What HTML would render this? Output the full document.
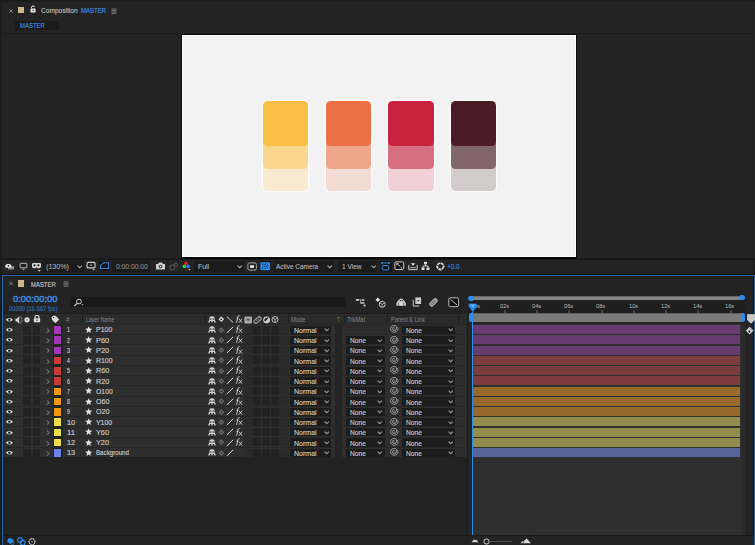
<!DOCTYPE html>
<html><head><meta charset="utf-8"><style>
html,body{margin:0;padding:0;}
body{width:755px;height:545px;overflow:hidden;position:relative;background:#1b1b1b;font-family:"Liberation Sans",sans-serif;}
body>div,body>svg{position:absolute;}
.t{white-space:nowrap;line-height:1;-webkit-text-stroke:0.15px currentColor;}
</style></head><body>
<div style="left:2px;top:2px;width:751px;height:256px;background:#232323;"></div>
<div style="left:753px;top:2px;width:2px;height:256px;background:#262626;"></div>
<div style="left:1px;top:33px;width:752px;height:1px;background:#1b1b1b;"></div>
<svg style="left:8px;top:8px;" width="6" height="6" viewBox="0 0 6 6"><path d="M1.3 1.3L4.7 4.7M4.7 1.3L1.3 4.7" stroke="#a0a0a0" stroke-width="0.75"/></svg>
<div style="left:18px;top:7px;width:6px;height:6px;background:#cdb68c;"></div>
<svg style="left:29px;top:5px;" width="8" height="8" viewBox="0 0 8 8"><path d="M2.5 3.2V2.2A1.6 1.6 0 0 1 5.6 2" fill="none" stroke="#e6e6e6" stroke-width="1"/><rect x="1.5" y="3.5" width="5" height="4" rx="0.5" fill="#e6e6e6"/><rect x="3.6" y="4.8" width="1" height="1.4" fill="#232323"/></svg>
<div class="t" style="left:41px;top:7.00px;font-size:7.70px;color:#bdbdbd;transform:scaleX(0.8572);transform-origin:0 0;">Composition</div>
<div class="t" style="left:81px;top:7.00px;font-size:7.27px;color:#3b8ee8;transform:scaleX(0.8255);transform-origin:0 0;">MASTER</div>
<svg style="left:111px;top:8px;" width="6" height="6" viewBox="0 0 6 6"><path d="M0.5 1H5.5M0.5 2.5H5.5M0.5 4H5.5M0.5 5.5H5.5" stroke="#8a8a8a" stroke-width="0.8"/></svg>
<div style="left:15px;top:21px;width:44px;height:9px;background:#1a1a1a;"></div>
<div class="t" style="left:19.9px;top:22.00px;font-size:7.27px;color:#3b8ee8;transform:scaleX(0.8189);transform-origin:0 0;">MASTER</div>
<div style="left:181px;top:34px;width:396px;height:225px;background:#0a0a0a;"></div>
<div style="left:182px;top:35px;width:394px;height:222px;background:#ffffff;"></div>
<div style="left:183px;top:36px;width:392px;height:220px;background:#f2f2f2;"></div>
<div style="left:262.9px;top:100.6px;width:45.3px;height:90.8px;background:#f2f2f2;border-radius:4.5px;box-shadow:0 0 2px 1px rgba(255,255,255,0.95);"></div>
<div style="left:262.9px;top:145.7px;width:45.3px;height:45.8px;background:#f8ebd1;border-radius:4.5px;"></div>
<div style="left:262.9px;top:123.1px;width:45.3px;height:45.8px;background:#fbd68e;border-radius:4.5px;"></div>
<div style="left:262.9px;top:100.6px;width:45.3px;height:45.8px;background:#fbbf47;border-radius:4.5px;"></div>
<div style="left:325.6px;top:100.6px;width:45.3px;height:90.8px;background:#f2f2f2;border-radius:4.5px;box-shadow:0 0 2px 1px rgba(255,255,255,0.95);"></div>
<div style="left:325.6px;top:145.7px;width:45.3px;height:45.8px;background:#f3dcd3;border-radius:4.5px;"></div>
<div style="left:325.6px;top:123.1px;width:45.3px;height:45.8px;background:#f0a68b;border-radius:4.5px;"></div>
<div style="left:325.6px;top:100.6px;width:45.3px;height:45.8px;background:#ec7045;border-radius:4.5px;"></div>
<div style="left:388.3px;top:100.6px;width:45.3px;height:90.8px;background:#f2f2f2;border-radius:4.5px;box-shadow:0 0 2px 1px rgba(255,255,255,0.95);"></div>
<div style="left:388.3px;top:145.7px;width:45.3px;height:45.8px;background:#f0d1d6;border-radius:4.5px;"></div>
<div style="left:388.3px;top:123.1px;width:45.3px;height:45.8px;background:#d66f80;border-radius:4.5px;"></div>
<div style="left:388.3px;top:100.6px;width:45.3px;height:45.8px;background:#c8223e;border-radius:4.5px;"></div>
<div style="left:451.0px;top:100.6px;width:45.3px;height:90.8px;background:#f2f2f2;border-radius:4.5px;box-shadow:0 0 2px 1px rgba(255,255,255,0.95);"></div>
<div style="left:451.0px;top:145.7px;width:45.3px;height:45.8px;background:#d4cbcd;border-radius:4.5px;"></div>
<div style="left:451.0px;top:123.1px;width:45.3px;height:45.8px;background:#82656b;border-radius:4.5px;"></div>
<div style="left:451.0px;top:100.6px;width:45.3px;height:45.8px;background:#4c1c26;border-radius:4.5px;"></div>
<div style="left:1px;top:258.5px;width:754px;height:1.2px;background:#181818;"></div>
<div style="left:2px;top:260px;width:751px;height:14px;background:#232323;"></div>
<div style="left:1px;top:274px;width:754px;height:1px;background:#151515;"></div>
<svg style="left:5px;top:261.5px;" width="10" height="9" viewBox="0 0 10 9"><rect x="3" y="4" width="6" height="3.6" rx="0.6" fill="#8a8a8a"/><path d="M0.6 3.2Q3.4 0.6 6.2 3.2L6.2 5.6H0.6Z" fill="#e8e8e8"/><rect x="0.6" y="2.6" width="5.6" height="3" rx="1.2" fill="#e8e8e8"/><circle cx="3.4" cy="3.9" r="0.8" fill="#1a1a1a"/></svg>
<svg style="left:18.5px;top:261.5px;" width="9" height="9" viewBox="0 0 9 9"><rect x="1.1" y="1.3" width="6.8" height="4.6" rx="0.9" fill="none" stroke="#b8b8b8" stroke-width="1"/><path d="M3 7.7H6L4.5 6.4Z" fill="#b8b8b8"/></svg>
<svg style="left:30.5px;top:261.5px;" width="11" height="10" viewBox="0 0 11 10"><path d="M1 2.2Q1 0.9 2.4 0.9H8.6Q10 0.9 10 2.2V4.2Q10 6.3 8 6.3H6.6L5.5 5.3L4.4 6.3H3Q1 6.3 1 4.2Z" fill="#d8d8d8"/><circle cx="3.6" cy="3.3" r="1.1" fill="#151515"/><circle cx="7.4" cy="3.3" r="1.1" fill="#151515"/><path d="M6.8 8L8.3 9.4L9.8 8Z" fill="#e0e0e0"/></svg>
<div style="left:43px;top:261px;width:41px;height:10.5px;background:#1b1b1b;border-radius:1px;"></div>
<div class="t" style="left:46.4px;top:263.00px;font-size:7.27px;color:#a8a8a8;transform:scaleX(0.9818);transform-origin:0 0;-webkit-text-stroke:0.1px currentColor;">(130%)</div>
<svg style="left:76.6px;top:265.2px;" width="5.5" height="3.9" viewBox="0 0 5.5 3.9"><path d="M0.6 0.6L2.75 2.8L4.9 0.6" fill="none" stroke="#b0b0b0" stroke-width="1.05"/></svg>
<svg style="left:86px;top:261px;" width="11" height="11" viewBox="0 0 11 11"><rect x="1.1" y="1.4" width="8" height="5.5" rx="1.2" fill="none" stroke="#d0d0d0" stroke-width="1.1"/><rect x="4.2" y="3.4" width="1.8" height="1.6" fill="#8a8a8a"/><path d="M6.3 8.2L7.6 9.5L8.9 8.2Z" fill="#e0e0e0"/></svg>
<div style="left:98.7px;top:260.6px;width:11.3px;height:10px;background:#131313;"></div>
<svg style="left:99px;top:261px;" width="11" height="11" viewBox="0 0 11 11"><path d="M1.5 7.5V4.5L4.7 1.8H9.5V7.5Z" fill="none" stroke="#3d8ee8" stroke-width="0.9"/><circle cx="1.5" cy="7.5" r="0.8" fill="#3d8ee8"/><circle cx="9.5" cy="7.5" r="0.8" fill="#3d8ee8"/><circle cx="1.5" cy="4.5" r="0.8" fill="#3d8ee8"/><circle cx="4.7" cy="1.8" r="0.8" fill="#3d8ee8"/><circle cx="9.5" cy="1.8" r="0.8" fill="#3d8ee8"/></svg>
<div style="left:112.3px;top:261px;width:39.2px;height:10.5px;background:#1b1b1b;"></div>
<div class="t" style="left:116.3px;top:263.00px;font-size:7.27px;color:#8c8c8c;transform:scaleX(0.9259);transform-origin:0 0;-webkit-text-stroke:0.1px currentColor;">0:00:00:00</div>
<svg style="left:155px;top:261px;" width="11" height="10" viewBox="0 0 11 10"><path d="M1 3H3L4 1.5H7L8 3H10V8.5H1Z" fill="#d0d0d0"/><circle cx="5.5" cy="5.6" r="1.8" fill="#232323"/><circle cx="5.5" cy="5.6" r="1" fill="#d0d0d0"/></svg>
<svg style="left:168.5px;top:261.5px;" width="10" height="9" viewBox="0 0 10 9"><circle cx="3.4" cy="5.4" r="2.4" fill="none" stroke="#505050" stroke-width="1.1"/><path d="M4.6 3.2Q6 0.8 8 1.6Q9.2 2.4 7.6 4.6" fill="none" stroke="#505050" stroke-width="1.1"/></svg>
<svg style="left:182px;top:260px;" width="10" height="12" viewBox="0 0 10 12"><circle cx="4.1" cy="3.3" r="1.9" fill="#e8141e"/><circle cx="2.4" cy="6.3" r="1.9" fill="#22d23a"/><circle cx="6.1" cy="6.3" r="1.9" fill="#3a6cf0"/><path d="M6.3 8.9L7.4 10.2L8.5 8.9Z" fill="#e0e0e0"/></svg>
<div style="left:193.7px;top:261px;width:50.1px;height:10.8px;background:#1b1b1b;"></div>
<div class="t" style="left:197.7px;top:263.00px;font-size:7.27px;color:#b8b8b8;transform:scaleX(0.9479);transform-origin:0 0;-webkit-text-stroke:0.1px currentColor;">Full</div>
<svg style="left:237.4px;top:265.2px;" width="5.5" height="3.9" viewBox="0 0 5.5 3.9"><path d="M0.6 0.6L2.75 2.8L4.9 0.6" fill="none" stroke="#b0b0b0" stroke-width="1.05"/></svg>
<svg style="left:247px;top:261.5px;" width="10" height="9" viewBox="0 0 10 9"><rect x="0.9" y="0.9" width="8.5" height="7.2" rx="1.6" fill="none" stroke="#a8a8a8" stroke-width="1"/><rect x="3" y="3.3" width="4" height="2.5" fill="#f0f0f0"/></svg>
<div style="left:259.5px;top:261.2px;width:11.5px;height:10px;background:#151515;"></div>
<svg style="left:260px;top:262px;" width="10.5" height="8.5" viewBox="0 0 10.5 8.5"><rect x="0.3" y="0.2" width="9.8" height="8.1" rx="1.2" fill="#2d8ceb"/><g fill="#101010"><circle cx="2.6" cy="2.2" r="0.6"/><circle cx="5.2" cy="2.2" r="0.6"/><circle cx="7.6" cy="3" r="0.6"/><circle cx="4" cy="4.2" r="0.6"/><circle cx="6.2" cy="4.2" r="0.6"/><circle cx="2.6" cy="6" r="0.6"/><circle cx="5.2" cy="6.2" r="0.6"/><circle cx="7.6" cy="5.6" r="0.6"/></g></svg>
<div style="left:273px;top:261px;width:61.2px;height:10.8px;background:#1b1b1b;"></div>
<div class="t" style="left:276.1px;top:263.00px;font-size:7.27px;color:#b8b8b8;transform:scaleX(0.8855);transform-origin:0 0;-webkit-text-stroke:0.1px currentColor;">Active Camera</div>
<svg style="left:327.3px;top:265.2px;" width="5.5" height="3.9" viewBox="0 0 5.5 3.9"><path d="M0.6 0.6L2.75 2.8L4.9 0.6" fill="none" stroke="#b0b0b0" stroke-width="1.05"/></svg>
<div style="left:337.8px;top:261px;width:39.2px;height:10.8px;background:#1b1b1b;"></div>
<div class="t" style="left:341.6px;top:263.00px;font-size:7.27px;color:#b8b8b8;transform:scaleX(0.9040);transform-origin:0 0;-webkit-text-stroke:0.1px currentColor;">1 View</div>
<svg style="left:371.2px;top:265.2px;" width="5.5" height="3.9" viewBox="0 0 5.5 3.9"><path d="M0.6 0.6L2.75 2.8L4.9 0.6" fill="none" stroke="#b0b0b0" stroke-width="1.05"/></svg>
<div style="left:379.8px;top:260.6px;width:11.8px;height:11px;background:#151515;"></div>
<svg style="left:380px;top:261px;" width="11" height="11" viewBox="0 0 11 11"><rect x="1" y="1.2" width="2" height="1.6" fill="#3d8ee8"/><rect x="8" y="1.2" width="2" height="1.6" fill="#3d8ee8"/><path d="M3 2H8" stroke="#3d8ee8" stroke-width="0.9"/><rect x="2.2" y="4.5" width="6.6" height="4.6" rx="1" fill="none" stroke="#3d8ee8" stroke-width="1"/></svg>
<svg style="left:393.5px;top:261.3px;" width="11" height="10" viewBox="0 0 11 10"><rect x="0.9" y="0.9" width="8.8" height="7.6" rx="1.2" fill="#141414" stroke="#c8c8c8" stroke-width="1"/><path d="M3 2.8L6 5.2" stroke="#cfcfcf" stroke-width="0.9"/><path d="M2.6 2.4H4.6M2.6 2.4V4.2" stroke="#cfcfcf" stroke-width="0.8"/><path d="M6.2 5.2L8.6 7.2L7.2 7.6Z" fill="#e0e0e0"/></svg>
<svg style="left:407.5px;top:261.5px;" width="10" height="9" viewBox="0 0 10 9"><path d="M0.8 3V7.6H9.2V3" fill="none" stroke="#cfcfcf" stroke-width="1"/><path d="M2.8 1.2H7.2L5 3.8Z" fill="#e8e8e8"/><path d="M2.4 5.6H7.6" stroke="#cfcfcf" stroke-width="0.9"/></svg>
<svg style="left:420.5px;top:261px;" width="9" height="10" viewBox="0 0 9 10"><rect x="3" y="0.8" width="3" height="2.6" fill="#dcdcdc"/><rect x="0.5" y="6.4" width="3" height="2.6" fill="#dcdcdc"/><rect x="5.5" y="6.4" width="3" height="2.6" fill="#dcdcdc"/><path d="M4.5 3.4V5M2 6.4V5H7V6.4" fill="none" stroke="#dcdcdc" stroke-width="0.9"/></svg>
<svg style="left:435.5px;top:261.5px;" width="9" height="9" viewBox="0 0 9 9"><circle cx="4.4" cy="4.3" r="3.2" fill="none" stroke="#d0d0d0" stroke-width="1.9" stroke-dasharray="3.2 0.55"/></svg>
<div class="t" style="left:447.3px;top:263.00px;font-size:7.27px;color:#3b8ee8;transform:scaleX(0.8852);transform-origin:0 0;-webkit-text-stroke:0.1px currentColor;">+0.0</div>
<div style="left:0px;top:275px;width:755px;height:270px;background:#1b1b1b;"></div>
<div style="left:2px;top:275px;width:753px;height:1px;background:#2b62a3;"></div>
<div style="left:2px;top:275px;width:1px;height:270px;background:#2b62a3;"></div>
<div style="left:754px;top:275px;width:1px;height:270px;background:#2b62a3;"></div>
<div style="left:3px;top:276px;width:751px;height:269px;background:#232323;"></div>
<div style="left:753px;top:276px;width:1px;height:269px;background:#141414;"></div>
<svg style="left:8px;top:280px;" width="6" height="7" viewBox="0 0 6 7"><path d="M1.3 1.8L4.7 5.2M4.7 1.8L1.3 5.2" stroke="#a0a0a0" stroke-width="0.75"/></svg>
<div style="left:18px;top:280px;width:6px;height:6.5px;background:#cdb68c;"></div>
<div class="t" style="left:31.3px;top:281.00px;font-size:7.27px;color:#c4c4c4;transform:scaleX(0.8156);transform-origin:0 0;">MASTER</div>
<svg style="left:62.5px;top:281px;" width="6" height="6" viewBox="0 0 6 6"><path d="M0.5 0.8H5.5M0.5 2.3H5.5M0.5 3.8H5.5M0.5 5.3H5.5" stroke="#8a8a8a" stroke-width="0.8"/></svg>
<div class="t" style="left:13px;top:294.00px;font-size:9.81px;color:#3d8ee8;transform:scaleX(0.9619);transform-origin:0 0;-webkit-text-stroke:0.4px currentColor;">0:00:00:00</div>
<div class="t" style="left:9px;top:306.00px;font-size:6.40px;color:#2d6cb4;transform:scaleX(0.9053);transform-origin:0 0;">00000 (16.667 fps)</div>
<div style="left:70px;top:297px;width:276px;height:10.3px;background:#191919;border-radius:1px;"></div>
<svg style="left:72.5px;top:298px;" width="12" height="9" viewBox="0 0 12 9"><circle cx="6" cy="3.5" r="2.4" fill="none" stroke="#d0d0d0" stroke-width="1"/><path d="M4.3 5.2L1.5 8" stroke="#d0d0d0" stroke-width="1.2"/><path d="M8.5 6.2L9.6 7.4L10.7 6.2Z" fill="#d0d0d0"/></svg>
<svg style="left:355px;top:298px;" width="12" height="10" viewBox="0 0 12 10"><g fill="#cfcfcf"><rect x="0.7" y="1" width="3.4" height="1.8" rx="0.9"/><rect x="6.5" y="1.2" width="3.2" height="1.6" rx="0.8"/><rect x="5.5" y="4.2" width="4.2" height="1.6" rx="0.8"/><rect x="8.4" y="6.5" width="2.2" height="1.9" rx="0.9"/></g><path d="M4 1.9H6.5M5.6 1.9V5H6" stroke="#cfcfcf" stroke-width="0.7" fill="none"/></svg>
<svg style="left:375px;top:296.5px;" width="12" height="11" viewBox="0 0 12 11"><rect x="1.2" y="1.2" width="3.2" height="3.2" transform="rotate(45 2.8 2.8)" fill="#e0e0e0"/><circle cx="7.2" cy="7.3" r="3" fill="none" stroke="#cfcfcf" stroke-width="1"/><path d="M7.2 7.3V9.8M7.2 7.3L5 6M7.2 7.3L9.4 6" stroke="#cfcfcf" stroke-width="0.8"/></svg>
<svg style="left:396px;top:297px;" width="11" height="9.5" viewBox="0 0 11 9.5"><path d="M0.3 8.8V6.2Q1.5 3.6 3.4 2.2Q5.1 0.6 6.8 2.2Q8.7 3.6 9.9 6.2V8.8Z" fill="#c8c8c8"/><circle cx="4.3" cy="3.6" r="0.7" fill="#1e1e1e"/><circle cx="6" cy="3.6" r="0.7" fill="#1e1e1e"/><path d="M2.4 5.6V8.6M7.9 5.6V8.6" stroke="#6a6a6a" stroke-width="0.8"/><rect x="4.6" y="4.6" width="1" height="4.2" fill="#f0f0f0"/></svg>
<svg style="left:412px;top:297px;" width="10" height="10" viewBox="0 0 10 10"><path d="M1.2 2.8V9H7" fill="none" stroke="#cfcfcf" stroke-width="1"/><rect x="3.3" y="0.4" width="5.8" height="6.6" fill="#c8c8c8"/><rect x="5.4" y="3" width="1.6" height="1.2" fill="#3a3a3a"/></svg>
<svg style="left:427.5px;top:297px;" width="11" height="10.5" viewBox="0 0 11 10.5"><rect x="0.8" y="3.2" width="9.4" height="4.4" rx="2.2" transform="rotate(-45 5.5 5.4)" fill="#9a9a9a" stroke="#bdbdbd" stroke-width="0.6"/><path d="M3.4 6.4L6.4 3.4M4.6 7.6L7.6 4.6" stroke="#5a5a5a" stroke-width="0.6"/></svg>
<svg style="left:447.8px;top:297.3px;" width="11.5" height="10.5" viewBox="0 0 11.5 10.5"><rect x="0.8" y="0.8" width="9.8" height="8.9" rx="1.6" fill="#111" stroke="#bdbdbd" stroke-width="1"/><path d="M2.3 2.2L8.9 7.9" stroke="#d0d0d0" stroke-width="0.9"/></svg>
<div style="left:3px;top:313.8px;width:464.2px;height:10.2px;background:#2b2b2b;"></div>
<div style="left:3px;top:313px;width:464.2px;height:0.8px;background:#1d1d1d;"></div>
<div style="left:3px;top:324px;width:464.2px;height:1px;background:#1c1c1c;"></div>
<svg style="left:5.3px;top:316.8px;" width="9" height="5.5" viewBox="0 0 9 5.5"><path d="M0.6 2.7Q4.4 -1.4 8.2 2.7Q4.4 6.8 0.6 2.7Z" fill="#ececec" stroke="#111" stroke-width="0.4"/><circle cx="4.4" cy="2.7" r="1.25" fill="#1a1a1a"/></svg>
<svg style="left:14.5px;top:316px;" width="9" height="8" viewBox="0 0 9 8"><path d="M0.5 2.5H2L4.2 0.5V7.5L2 5.5H0.5Z" fill="#d8d8d8"/><path d="M4.5 0.6A3.6 3.6 0 0 1 4.5 7.4" fill="none" stroke="#9a9a9a" stroke-width="1.3" stroke-dasharray="0.8 0.6"/></svg>
<svg style="left:24.3px;top:317px;" width="6" height="6" viewBox="0 0 6 6"><circle cx="3" cy="2.8" r="2.6" fill="#dcdcdc"/><circle cx="3" cy="2.8" r="0.9" fill="#8a8a8a"/></svg>
<svg style="left:33px;top:315.2px;" width="8" height="8" viewBox="0 0 8 8"><path d="M2 3.4V2.4A2 2 0 0 1 6 2.4V3.4" fill="none" stroke="#e0e0e0" stroke-width="1.1"/><rect x="0.8" y="3.3" width="6.4" height="3.9" rx="0.6" fill="#e0e0e0"/><rect x="3.5" y="4.4" width="1" height="1.6" fill="#2b2b2b"/></svg>
<div style="left:44px;top:315px;width:0.8px;height:8px;background:#1e1e1e;"></div>
<svg style="left:51.3px;top:315.3px;" width="9" height="8" viewBox="0 0 9 8"><path d="M0.8 2.2L2.2 0.8H4.6L8.2 4.4L4.4 8.2L0.8 4.6Z" fill="#dcdcdc"/><circle cx="2.6" cy="2.6" r="0.7" fill="#262626"/></svg>
<div class="t" style="left:66px;top:317.00px;font-size:6.40px;color:#858585;transform:scaleX(0.8998);transform-origin:0 0;font-style:italic;-webkit-text-stroke:0px currentColor;">#</div>
<div style="left:82.2px;top:315px;width:0.8px;height:8px;background:#1e1e1e;"></div>
<div style="left:62.3px;top:315px;width:0.8px;height:8px;background:#222222;"></div>
<div class="t" style="left:86px;top:317.00px;font-size:6.69px;color:#858585;transform:scaleX(0.7826);transform-origin:0 0;-webkit-text-stroke:0px currentColor;">Layer Name</div>
<div style="left:205.4px;top:315px;width:0.8px;height:8px;background:#1e1e1e;"></div>
<svg style="left:208.4px;top:316.2px;" width="8" height="7" viewBox="0 0 8 7"><ellipse cx="4" cy="2.5" rx="2.6" ry="2.3" fill="#d4d4d4"/><path d="M2 3.8L0.7 6.6M4 4.2V6.6M6 3.8L7.3 6.6" stroke="#d4d4d4" stroke-width="1.3"/><rect x="1.8" y="3.6" width="4.4" height="1.4" fill="#d4d4d4"/><circle cx="2.8" cy="2.9" r="0.75" fill="#202020"/><circle cx="5.2" cy="2.9" r="0.75" fill="#202020"/></svg>
<svg style="left:217.8px;top:316.4px;" width="7" height="7" viewBox="0 0 7 7"><path d="M3.3 0.3L6.2 3.2L3.3 6.1L0.4 3.2Z" fill="#cfcfcf"/><ellipse cx="3.3" cy="3.2" rx="0.9" ry="0.7" fill="#262626"/></svg>
<svg style="left:226px;top:316px;" width="8" height="7" viewBox="0 0 8 7"><path d="M0.8 0.6L7.2 6.6" stroke="#d8d8d8" stroke-width="1"/></svg>
<svg style="left:235px;top:314.8px;" width="8" height="8.5" viewBox="0 0 8 8.5"><path d="M4.6 0.6Q3.2 0.2 2.8 2L1.6 7.8" fill="none" stroke="#d8d8d8" stroke-width="0.9"/><path d="M1.4 3.2H3.6" stroke="#d8d8d8" stroke-width="0.8"/><path d="M4 3.8L7 7.6M7 3.8L4 7.6" stroke="#d8d8d8" stroke-width="0.9"/></svg>
<svg style="left:243.8px;top:315.8px;" width="8.5" height="8" viewBox="0 0 8.5 8"><rect x="0.4" y="0.4" width="7.6" height="7.2" rx="1" fill="#a8a8a8"/><rect x="2.6" y="2.6" width="3.2" height="2" fill="#5a5a5a"/></svg>
<svg style="left:253px;top:315.6px;" width="9" height="8" viewBox="0 0 9 8"><rect x="0.5" y="2.3" width="8" height="3.6" rx="1.8" transform="rotate(-40 4.5 4)" fill="none" stroke="#9a9a9a" stroke-width="1.2"/><path d="M2.8 5.2L6.2 2.8" stroke="#9a9a9a" stroke-width="0.7"/></svg>
<svg style="left:262.8px;top:315.8px;" width="8" height="8" viewBox="0 0 8 8"><circle cx="3.6" cy="3.9" r="3.1" fill="#c8c8c8" stroke="#e6e6e6" stroke-width="0.6"/><path d="M1.2 4.6Q1.6 1.2 5.6 1.6L2.4 5.4Z" fill="#1c1c1c"/></svg>
<svg style="left:271px;top:316px;" width="9" height="7" viewBox="0 0 9 7"><circle cx="4" cy="3.5" r="3" fill="none" stroke="#c8c8c8" stroke-width="0.9"/><path d="M4 3.5V6.3M4 3.5L1.5 2M4 3.5L6.5 2" stroke="#c8c8c8" stroke-width="0.8"/></svg>
<div style="left:288.2px;top:315px;width:0.8px;height:8px;background:#1e1e1e;"></div>
<div class="t" style="left:291px;top:317.00px;font-size:6.69px;color:#858585;transform:scaleX(0.8730);transform-origin:0 0;-webkit-text-stroke:0px currentColor;">Mode</div>
<div style="left:332.2px;top:315px;width:1.2px;height:8.6px;background:#2c2c2c;"></div>
<div class="t" style="left:337.4px;top:317.00px;font-size:6.69px;color:#858585;transform:scaleX(0.6857);transform-origin:0 0;-webkit-text-stroke:0px currentColor;">T</div>
<div style="left:344.2px;top:315px;width:0.8px;height:8px;background:#1e1e1e;"></div>
<div class="t" style="left:347px;top:317.00px;font-size:6.69px;color:#858585;transform:scaleX(0.8759);transform-origin:0 0;-webkit-text-stroke:0px currentColor;">TrkMat</div>
<div style="left:387.3px;top:315px;width:0.8px;height:8px;background:#1e1e1e;"></div>
<div class="t" style="left:391px;top:317.00px;font-size:6.69px;color:#858585;transform:scaleX(0.8396);transform-origin:0 0;-webkit-text-stroke:0px currentColor;">Parent &amp; Link</div>
<div style="left:457.8px;top:315px;width:0.8px;height:8px;background:#1e1e1e;"></div>
<div style="left:467.2px;top:276px;width:286px;height:259px;background:#232323;"></div>
<div style="left:467.2px;top:313px;width:1.1px;height:222px;background:#1a1a1a;"></div>
<div style="left:468.3px;top:313px;width:4.2px;height:222px;background:#262626;"></div>
<div style="left:472.5px;top:324px;width:268px;height:211px;background:#2f2f2f;"></div>
<div style="left:741px;top:313px;width:12px;height:222px;background:#232323;"></div>
<div style="left:740.5px;top:324px;width:4.8px;height:211px;background:#2a2a2a;"></div>
<div style="left:472.2px;top:295.6px;width:268.2px;height:4.7px;background:#848484;border-top:0.6px solid #666;box-sizing:border-box;"></div>
<div style="left:467.6px;top:295.8px;width:5.6px;height:4.8px;background:#2d8ceb;border-radius:2.4px 0 0 2.4px;"></div>
<div style="left:740.4px;top:295.2px;width:4.6px;height:5.3px;background:#2d8ceb;border-radius:0 2.6px 2.6px 0;"></div>
<div style="left:468px;top:301px;width:277.7px;height:11.6px;background:#1f1f1f;"></div>
<div class="t" style="left:471.2px;top:303.00px;font-size:6.25px;color:#b0b0b0;transform:scaleX(0.9130);transform-origin:0 0;-webkit-text-stroke:0.05px currentColor;">00s</div>
<svg style="left:471.5px;top:309.5px;" width="2" height="3" viewBox="0 0 2 3"><path d="M1 0.3V2.8" stroke="#8a8a8a" stroke-width="0.8"/></svg>
<div class="t" style="left:499.55px;top:303.00px;font-size:6.25px;color:#b0b0b0;transform:scaleX(0.9130);transform-origin:0 0;-webkit-text-stroke:0.05px currentColor;">02s</div>
<svg style="left:503.75px;top:309.5px;" width="2" height="3" viewBox="0 0 2 3"><path d="M1 0.3V2.8" stroke="#8a8a8a" stroke-width="0.8"/></svg>
<div class="t" style="left:531.8px;top:303.00px;font-size:6.25px;color:#b0b0b0;transform:scaleX(0.9130);transform-origin:0 0;-webkit-text-stroke:0.05px currentColor;">04s</div>
<svg style="left:536.0px;top:309.5px;" width="2" height="3" viewBox="0 0 2 3"><path d="M1 0.3V2.8" stroke="#8a8a8a" stroke-width="0.8"/></svg>
<div class="t" style="left:564.05px;top:303.00px;font-size:6.25px;color:#b0b0b0;transform:scaleX(0.9130);transform-origin:0 0;-webkit-text-stroke:0.05px currentColor;">06s</div>
<svg style="left:568.25px;top:309.5px;" width="2" height="3" viewBox="0 0 2 3"><path d="M1 0.3V2.8" stroke="#8a8a8a" stroke-width="0.8"/></svg>
<div class="t" style="left:596.3px;top:303.00px;font-size:6.25px;color:#b0b0b0;transform:scaleX(0.9130);transform-origin:0 0;-webkit-text-stroke:0.05px currentColor;">08s</div>
<svg style="left:600.5px;top:309.5px;" width="2" height="3" viewBox="0 0 2 3"><path d="M1 0.3V2.8" stroke="#8a8a8a" stroke-width="0.8"/></svg>
<div class="t" style="left:628.55px;top:303.00px;font-size:6.25px;color:#b0b0b0;transform:scaleX(0.9130);transform-origin:0 0;-webkit-text-stroke:0.05px currentColor;">10s</div>
<svg style="left:632.75px;top:309.5px;" width="2" height="3" viewBox="0 0 2 3"><path d="M1 0.3V2.8" stroke="#8a8a8a" stroke-width="0.8"/></svg>
<div class="t" style="left:660.8px;top:303.00px;font-size:6.25px;color:#b0b0b0;transform:scaleX(0.9130);transform-origin:0 0;-webkit-text-stroke:0.05px currentColor;">12s</div>
<svg style="left:665.0px;top:309.5px;" width="2" height="3" viewBox="0 0 2 3"><path d="M1 0.3V2.8" stroke="#8a8a8a" stroke-width="0.8"/></svg>
<div class="t" style="left:693.05px;top:303.00px;font-size:6.25px;color:#b0b0b0;transform:scaleX(0.9130);transform-origin:0 0;-webkit-text-stroke:0.05px currentColor;">14s</div>
<svg style="left:697.25px;top:309.5px;" width="2" height="3" viewBox="0 0 2 3"><path d="M1 0.3V2.8" stroke="#8a8a8a" stroke-width="0.8"/></svg>
<div class="t" style="left:725.3px;top:303.00px;font-size:6.25px;color:#b0b0b0;transform:scaleX(0.9130);transform-origin:0 0;-webkit-text-stroke:0.05px currentColor;">16s</div>
<svg style="left:729.5px;top:309.5px;" width="2" height="3" viewBox="0 0 2 3"><path d="M1 0.3V2.8" stroke="#8a8a8a" stroke-width="0.8"/></svg>
<div style="left:472.6px;top:313px;width:268px;height:9.3px;background:#7a7a7a;border-top:0.7px solid #5e5e5e;box-sizing:border-box;"></div>
<div style="left:468.5px;top:313.2px;width:4.3px;height:9px;background:#2d8ceb;border-radius:2px 0 0 2px;"></div>
<div style="left:741px;top:313.2px;width:3.5px;height:9px;background:#2d8ceb;border-radius:0 2px 2px 0;"></div>
<svg style="left:746.5px;top:313.5px;" width="8" height="10" viewBox="0 0 8 10"><path d="M0.5 0.5H7.5V6L4 9.2L0.5 6Z" fill="#c8c8c8" stroke="#e8e8e8" stroke-width="0.6"/></svg>
<svg style="left:744.5px;top:325.8px;" width="10" height="10" viewBox="0 0 10 10"><path d="M4.6 0.6L8.8 4.6L4.6 8.8L0.6 4.8Z" fill="#d4d4d4" stroke="#111" stroke-width="0.4"/><path d="M4.8 2.4L7 4.6" stroke="#777" stroke-width="0.7"/><circle cx="4.4" cy="5.4" r="1" fill="#111"/></svg>
<div style="left:3px;top:324px;width:464.2px;height:133.4px;background:#272727;"></div>
<div style="left:3px;top:457.3px;width:464.2px;height:77.7px;background:#222222;"></div>
<div style="left:3px;top:324.9px;width:464.2px;height:9.2px;background:#2e2e2e;"></div>
<svg style="left:5.3px;top:327.1px;" width="9" height="5.5" viewBox="0 0 9 5.5"><path d="M0.6 2.7Q4.4 -1.4 8.2 2.7Q4.4 6.8 0.6 2.7Z" fill="#ececec" stroke="#111" stroke-width="0.4"/><circle cx="4.4" cy="2.7" r="1.25" fill="#1a1a1a"/></svg>
<div style="left:23.3px;top:325.5px;width:7.5px;height:8px;background:#222222;"></div>
<div style="left:32.7px;top:325.5px;width:7.1px;height:8px;background:#222222;"></div>
<svg style="left:46.3px;top:327.8px;" width="4.5" height="5.5" viewBox="0 0 4.5 5.5"><path d="M0.8 0.6L3.3 2.6L0.8 4.6" fill="none" stroke="#8c8c8c" stroke-width="0.95"/></svg>
<div style="left:52.7px;top:324.9px;width:10px;height:9.2px;background:#1f241f;"></div>
<div style="left:53.9px;top:326.0px;width:7.5px;height:7.5px;background:#a235b8;"></div>
<div class="t" style="left:67px;top:326.00px;font-size:7.56px;color:#c9c9c9;transform:scaleX(0.6900);transform-origin:0 0;">1</div>
<svg style="left:84.8px;top:325.8px;" width="8" height="8" viewBox="0 0 8 8"><path d="M3.70 0.20 L4.67 2.57 L7.22 2.76 L5.27 4.41 L5.87 6.89 L3.70 5.55 L1.53 6.89 L2.13 4.41 L0.18 2.76 L2.73 2.57Z" fill="#e4e4e4"/></svg>
<div class="t" style="left:95.5px;top:326.00px;font-size:7.56px;color:#c9c9c9;transform:scaleX(0.9291);transform-origin:0 0;">P100</div>
<svg style="left:208.4px;top:326.3px;" width="8" height="7" viewBox="0 0 8 7"><ellipse cx="4" cy="2.5" rx="2.6" ry="2.3" fill="#d4d4d4"/><path d="M2 3.8L0.7 6.6M4 4.2V6.6M6 3.8L7.3 6.6" stroke="#d4d4d4" stroke-width="1.3"/><rect x="1.8" y="3.6" width="4.4" height="1.4" fill="#d4d4d4"/><circle cx="2.8" cy="2.9" r="0.75" fill="#202020"/><circle cx="5.2" cy="2.9" r="0.75" fill="#202020"/></svg>
<svg style="left:217.8px;top:326.5px;" width="7" height="7" viewBox="0 0 7 7"><path d="M3.3 0.3L6.2 3.2L3.3 6.1L0.4 3.2Z" fill="#6a6a6a"/><ellipse cx="3.3" cy="3.2" rx="0.9" ry="0.7" fill="#262626"/></svg>
<svg style="left:226px;top:325.9px;" width="8" height="8" viewBox="0 0 8 8"><path d="M0.8 7L7.2 0.8" stroke="#d8d8d8" stroke-width="1"/></svg>
<svg style="left:235px;top:325.2px;" width="8" height="8.5" viewBox="0 0 8 8.5"><path d="M4.6 0.6Q3.2 0.2 2.8 2L1.6 7.8" fill="none" stroke="#cfcfcf" stroke-width="0.9"/><path d="M1.4 3.2H3.6" stroke="#cfcfcf" stroke-width="0.8"/><path d="M4 3.8L7 7.6M7 3.8L4 7.6" stroke="#cfcfcf" stroke-width="0.9"/></svg>
<div style="left:243.6px;top:325.5px;width:9px;height:8px;background:#2a2a2a;"></div>
<div style="left:253.1px;top:325.5px;width:8px;height:8px;background:#222222;"></div>
<div style="left:262.3px;top:325.5px;width:7.9px;height:8px;background:#222222;"></div>
<div style="left:271.4px;top:325.5px;width:7.6px;height:8px;background:#222222;"></div>
<div style="left:279.4px;top:325.5px;width:9.9px;height:8px;background:#2a2a2a;"></div>
<div style="left:290.2px;top:325.6px;width:40.5px;height:8.3px;background:#1c1c1c;"></div>
<div class="t" style="left:293.7px;top:327.00px;font-size:7.56px;color:#c9c9c9;transform:scaleX(0.9320);transform-origin:0 0;">Normal</div>
<svg style="left:324px;top:328.4px;" width="5.5" height="3.8" viewBox="0 0 5.5 3.8"><path d="M0.6 0.6L2.75 2.6999999999999997L4.9 0.6" fill="none" stroke="#9a9a9a" stroke-width="1.05"/></svg>
<div style="left:331.6px;top:324.9px;width:2px;height:9.2px;background:#2f2f2f;"></div>
<div style="left:334.8px;top:324.9px;width:6.9px;height:9.2px;background:#232323;"></div>
<div style="left:342.7px;top:324.9px;width:44.5px;height:9.2px;background:#2c2c2c;"></div>
<svg style="left:389.8px;top:325.4px;" width="9" height="8" viewBox="0 0 9 8"><path d="M7.6 2.2A3.7 3.5 0 1 1 5.6 0.5M5.6 0.5Q7.2 1.6 6.3 3.9A1.9 1.8 0 1 1 4.4 2.0" fill="none" stroke="#a8a8a8" stroke-width="0.85"/><circle cx="4.4" cy="3.9" r="0.5" fill="#a8a8a8"/></svg>
<div style="left:402.2px;top:325.5px;width:52.8px;height:8.3px;background:#1c1c1c;"></div>
<div class="t" style="left:405.8px;top:327.00px;font-size:7.56px;color:#c9c9c9;transform:scaleX(0.8800);transform-origin:0 0;">None</div>
<svg style="left:447.8px;top:328.4px;" width="5.5" height="3.8" viewBox="0 0 5.5 3.8"><path d="M0.6 0.6L2.75 2.6999999999999997L4.9 0.6" fill="none" stroke="#9a9a9a" stroke-width="1.05"/></svg>
<div style="left:473px;top:325.1px;width:267.2px;height:9px;background:#673a70;"></div>
<div style="left:3px;top:335.15px;width:464.2px;height:9.2px;background:#2e2e2e;"></div>
<svg style="left:5.3px;top:337.35px;" width="9" height="5.5" viewBox="0 0 9 5.5"><path d="M0.6 2.7Q4.4 -1.4 8.2 2.7Q4.4 6.8 0.6 2.7Z" fill="#ececec" stroke="#111" stroke-width="0.4"/><circle cx="4.4" cy="2.7" r="1.25" fill="#1a1a1a"/></svg>
<div style="left:23.3px;top:335.75px;width:7.5px;height:8px;background:#222222;"></div>
<div style="left:32.7px;top:335.75px;width:7.1px;height:8px;background:#222222;"></div>
<svg style="left:46.3px;top:338.05px;" width="4.5" height="5.5" viewBox="0 0 4.5 5.5"><path d="M0.8 0.6L3.3 2.6L0.8 4.6" fill="none" stroke="#8c8c8c" stroke-width="0.95"/></svg>
<div style="left:52.7px;top:335.15px;width:10px;height:9.2px;background:#1f241f;"></div>
<div style="left:53.9px;top:336.25px;width:7.5px;height:7.5px;background:#a235b8;"></div>
<div class="t" style="left:67px;top:337.00px;font-size:7.56px;color:#c9c9c9;transform:scaleX(0.6900);transform-origin:0 0;">2</div>
<svg style="left:84.8px;top:336.05px;" width="8" height="8" viewBox="0 0 8 8"><path d="M3.70 0.20 L4.67 2.57 L7.22 2.76 L5.27 4.41 L5.87 6.89 L3.70 5.55 L1.53 6.89 L2.13 4.41 L0.18 2.76 L2.73 2.57Z" fill="#e4e4e4"/></svg>
<div class="t" style="left:95.5px;top:337.00px;font-size:7.56px;color:#c9c9c9;transform:scaleX(0.9816);transform-origin:0 0;">P60</div>
<svg style="left:208.4px;top:336.55px;" width="8" height="7" viewBox="0 0 8 7"><ellipse cx="4" cy="2.5" rx="2.6" ry="2.3" fill="#d4d4d4"/><path d="M2 3.8L0.7 6.6M4 4.2V6.6M6 3.8L7.3 6.6" stroke="#d4d4d4" stroke-width="1.3"/><rect x="1.8" y="3.6" width="4.4" height="1.4" fill="#d4d4d4"/><circle cx="2.8" cy="2.9" r="0.75" fill="#202020"/><circle cx="5.2" cy="2.9" r="0.75" fill="#202020"/></svg>
<svg style="left:217.8px;top:336.75px;" width="7" height="7" viewBox="0 0 7 7"><path d="M3.3 0.3L6.2 3.2L3.3 6.1L0.4 3.2Z" fill="#6a6a6a"/><ellipse cx="3.3" cy="3.2" rx="0.9" ry="0.7" fill="#262626"/></svg>
<svg style="left:226px;top:336.15px;" width="8" height="8" viewBox="0 0 8 8"><path d="M0.8 7L7.2 0.8" stroke="#d8d8d8" stroke-width="1"/></svg>
<svg style="left:235px;top:335.45px;" width="8" height="8.5" viewBox="0 0 8 8.5"><path d="M4.6 0.6Q3.2 0.2 2.8 2L1.6 7.8" fill="none" stroke="#cfcfcf" stroke-width="0.9"/><path d="M1.4 3.2H3.6" stroke="#cfcfcf" stroke-width="0.8"/><path d="M4 3.8L7 7.6M7 3.8L4 7.6" stroke="#cfcfcf" stroke-width="0.9"/></svg>
<div style="left:243.6px;top:335.75px;width:9px;height:8px;background:#2a2a2a;"></div>
<div style="left:253.1px;top:335.75px;width:8px;height:8px;background:#222222;"></div>
<div style="left:262.3px;top:335.75px;width:7.9px;height:8px;background:#222222;"></div>
<div style="left:271.4px;top:335.75px;width:7.6px;height:8px;background:#222222;"></div>
<div style="left:279.4px;top:335.75px;width:9.9px;height:8px;background:#2a2a2a;"></div>
<div style="left:290.2px;top:335.85px;width:40.5px;height:8.3px;background:#1c1c1c;"></div>
<div class="t" style="left:293.7px;top:337.00px;font-size:7.56px;color:#c9c9c9;transform:scaleX(0.9320);transform-origin:0 0;">Normal</div>
<svg style="left:324px;top:338.65px;" width="5.5" height="3.8" viewBox="0 0 5.5 3.8"><path d="M0.6 0.6L2.75 2.6999999999999997L4.9 0.6" fill="none" stroke="#9a9a9a" stroke-width="1.05"/></svg>
<div style="left:331.6px;top:335.15px;width:2px;height:9.2px;background:#2f2f2f;"></div>
<div style="left:334.8px;top:335.15px;width:6.9px;height:9.2px;background:#232323;"></div>
<div style="left:345.9px;top:335.75px;width:38.7px;height:8.3px;background:#1c1c1c;"></div>
<div class="t" style="left:349.6px;top:337.00px;font-size:7.56px;color:#c9c9c9;transform:scaleX(0.8800);transform-origin:0 0;">None</div>
<svg style="left:377.2px;top:338.65px;" width="5.5" height="3.8" viewBox="0 0 5.5 3.8"><path d="M0.6 0.6L2.75 2.6999999999999997L4.9 0.6" fill="none" stroke="#9a9a9a" stroke-width="1.05"/></svg>
<svg style="left:389.8px;top:335.65px;" width="9" height="8" viewBox="0 0 9 8"><path d="M7.6 2.2A3.7 3.5 0 1 1 5.6 0.5M5.6 0.5Q7.2 1.6 6.3 3.9A1.9 1.8 0 1 1 4.4 2.0" fill="none" stroke="#a8a8a8" stroke-width="0.85"/><circle cx="4.4" cy="3.9" r="0.5" fill="#a8a8a8"/></svg>
<div style="left:402.2px;top:335.75px;width:52.8px;height:8.3px;background:#1c1c1c;"></div>
<div class="t" style="left:405.8px;top:337.00px;font-size:7.56px;color:#c9c9c9;transform:scaleX(0.8800);transform-origin:0 0;">None</div>
<svg style="left:447.8px;top:338.65px;" width="5.5" height="3.8" viewBox="0 0 5.5 3.8"><path d="M0.6 0.6L2.75 2.6999999999999997L4.9 0.6" fill="none" stroke="#9a9a9a" stroke-width="1.05"/></svg>
<div style="left:473px;top:335.35px;width:267.2px;height:9px;background:#673a70;"></div>
<div style="left:3px;top:345.4px;width:464.2px;height:9.2px;background:#2e2e2e;"></div>
<svg style="left:5.3px;top:347.6px;" width="9" height="5.5" viewBox="0 0 9 5.5"><path d="M0.6 2.7Q4.4 -1.4 8.2 2.7Q4.4 6.8 0.6 2.7Z" fill="#ececec" stroke="#111" stroke-width="0.4"/><circle cx="4.4" cy="2.7" r="1.25" fill="#1a1a1a"/></svg>
<div style="left:23.3px;top:346.0px;width:7.5px;height:8px;background:#222222;"></div>
<div style="left:32.7px;top:346.0px;width:7.1px;height:8px;background:#222222;"></div>
<svg style="left:46.3px;top:348.3px;" width="4.5" height="5.5" viewBox="0 0 4.5 5.5"><path d="M0.8 0.6L3.3 2.6L0.8 4.6" fill="none" stroke="#8c8c8c" stroke-width="0.95"/></svg>
<div style="left:52.7px;top:345.4px;width:10px;height:9.2px;background:#1f241f;"></div>
<div style="left:53.9px;top:346.5px;width:7.5px;height:7.5px;background:#a235b8;"></div>
<div class="t" style="left:67px;top:347.00px;font-size:7.56px;color:#c9c9c9;transform:scaleX(0.6900);transform-origin:0 0;">3</div>
<svg style="left:84.8px;top:346.3px;" width="8" height="8" viewBox="0 0 8 8"><path d="M3.70 0.20 L4.67 2.57 L7.22 2.76 L5.27 4.41 L5.87 6.89 L3.70 5.55 L1.53 6.89 L2.13 4.41 L0.18 2.76 L2.73 2.57Z" fill="#e4e4e4"/></svg>
<div class="t" style="left:95.5px;top:347.00px;font-size:7.56px;color:#c9c9c9;transform:scaleX(0.9816);transform-origin:0 0;">P20</div>
<svg style="left:208.4px;top:346.8px;" width="8" height="7" viewBox="0 0 8 7"><ellipse cx="4" cy="2.5" rx="2.6" ry="2.3" fill="#d4d4d4"/><path d="M2 3.8L0.7 6.6M4 4.2V6.6M6 3.8L7.3 6.6" stroke="#d4d4d4" stroke-width="1.3"/><rect x="1.8" y="3.6" width="4.4" height="1.4" fill="#d4d4d4"/><circle cx="2.8" cy="2.9" r="0.75" fill="#202020"/><circle cx="5.2" cy="2.9" r="0.75" fill="#202020"/></svg>
<svg style="left:217.8px;top:347.0px;" width="7" height="7" viewBox="0 0 7 7"><path d="M3.3 0.3L6.2 3.2L3.3 6.1L0.4 3.2Z" fill="#6a6a6a"/><ellipse cx="3.3" cy="3.2" rx="0.9" ry="0.7" fill="#262626"/></svg>
<svg style="left:226px;top:346.4px;" width="8" height="8" viewBox="0 0 8 8"><path d="M0.8 7L7.2 0.8" stroke="#d8d8d8" stroke-width="1"/></svg>
<svg style="left:235px;top:345.7px;" width="8" height="8.5" viewBox="0 0 8 8.5"><path d="M4.6 0.6Q3.2 0.2 2.8 2L1.6 7.8" fill="none" stroke="#cfcfcf" stroke-width="0.9"/><path d="M1.4 3.2H3.6" stroke="#cfcfcf" stroke-width="0.8"/><path d="M4 3.8L7 7.6M7 3.8L4 7.6" stroke="#cfcfcf" stroke-width="0.9"/></svg>
<div style="left:243.6px;top:346.0px;width:9px;height:8px;background:#2a2a2a;"></div>
<div style="left:253.1px;top:346.0px;width:8px;height:8px;background:#222222;"></div>
<div style="left:262.3px;top:346.0px;width:7.9px;height:8px;background:#222222;"></div>
<div style="left:271.4px;top:346.0px;width:7.6px;height:8px;background:#222222;"></div>
<div style="left:279.4px;top:346.0px;width:9.9px;height:8px;background:#2a2a2a;"></div>
<div style="left:290.2px;top:346.1px;width:40.5px;height:8.3px;background:#1c1c1c;"></div>
<div class="t" style="left:293.7px;top:347.00px;font-size:7.56px;color:#c9c9c9;transform:scaleX(0.9320);transform-origin:0 0;">Normal</div>
<svg style="left:324px;top:348.9px;" width="5.5" height="3.8" viewBox="0 0 5.5 3.8"><path d="M0.6 0.6L2.75 2.6999999999999997L4.9 0.6" fill="none" stroke="#9a9a9a" stroke-width="1.05"/></svg>
<div style="left:331.6px;top:345.4px;width:2px;height:9.2px;background:#2f2f2f;"></div>
<div style="left:334.8px;top:345.4px;width:6.9px;height:9.2px;background:#232323;"></div>
<div style="left:345.9px;top:346.0px;width:38.7px;height:8.3px;background:#1c1c1c;"></div>
<div class="t" style="left:349.6px;top:347.00px;font-size:7.56px;color:#c9c9c9;transform:scaleX(0.8800);transform-origin:0 0;">None</div>
<svg style="left:377.2px;top:348.9px;" width="5.5" height="3.8" viewBox="0 0 5.5 3.8"><path d="M0.6 0.6L2.75 2.6999999999999997L4.9 0.6" fill="none" stroke="#9a9a9a" stroke-width="1.05"/></svg>
<svg style="left:389.8px;top:345.9px;" width="9" height="8" viewBox="0 0 9 8"><path d="M7.6 2.2A3.7 3.5 0 1 1 5.6 0.5M5.6 0.5Q7.2 1.6 6.3 3.9A1.9 1.8 0 1 1 4.4 2.0" fill="none" stroke="#a8a8a8" stroke-width="0.85"/><circle cx="4.4" cy="3.9" r="0.5" fill="#a8a8a8"/></svg>
<div style="left:402.2px;top:346.0px;width:52.8px;height:8.3px;background:#1c1c1c;"></div>
<div class="t" style="left:405.8px;top:347.00px;font-size:7.56px;color:#c9c9c9;transform:scaleX(0.8800);transform-origin:0 0;">None</div>
<svg style="left:447.8px;top:348.9px;" width="5.5" height="3.8" viewBox="0 0 5.5 3.8"><path d="M0.6 0.6L2.75 2.6999999999999997L4.9 0.6" fill="none" stroke="#9a9a9a" stroke-width="1.05"/></svg>
<div style="left:473px;top:345.6px;width:267.2px;height:9px;background:#673a70;"></div>
<div style="left:3px;top:355.65px;width:464.2px;height:9.2px;background:#2e2e2e;"></div>
<svg style="left:5.3px;top:357.85px;" width="9" height="5.5" viewBox="0 0 9 5.5"><path d="M0.6 2.7Q4.4 -1.4 8.2 2.7Q4.4 6.8 0.6 2.7Z" fill="#ececec" stroke="#111" stroke-width="0.4"/><circle cx="4.4" cy="2.7" r="1.25" fill="#1a1a1a"/></svg>
<div style="left:23.3px;top:356.25px;width:7.5px;height:8px;background:#222222;"></div>
<div style="left:32.7px;top:356.25px;width:7.1px;height:8px;background:#222222;"></div>
<svg style="left:46.3px;top:358.55px;" width="4.5" height="5.5" viewBox="0 0 4.5 5.5"><path d="M0.8 0.6L3.3 2.6L0.8 4.6" fill="none" stroke="#8c8c8c" stroke-width="0.95"/></svg>
<div style="left:52.7px;top:355.65px;width:10px;height:9.2px;background:#1f241f;"></div>
<div style="left:53.9px;top:356.75px;width:7.5px;height:7.5px;background:#c83a3a;"></div>
<div class="t" style="left:67px;top:357.00px;font-size:7.56px;color:#c9c9c9;transform:scaleX(0.6900);transform-origin:0 0;">4</div>
<svg style="left:84.8px;top:356.55px;" width="8" height="8" viewBox="0 0 8 8"><path d="M3.70 0.20 L4.67 2.57 L7.22 2.76 L5.27 4.41 L5.87 6.89 L3.70 5.55 L1.53 6.89 L2.13 4.41 L0.18 2.76 L2.73 2.57Z" fill="#e4e4e4"/></svg>
<div class="t" style="left:95.5px;top:357.00px;font-size:7.56px;color:#c9c9c9;transform:scaleX(0.9188);transform-origin:0 0;">R100</div>
<svg style="left:208.4px;top:357.05px;" width="8" height="7" viewBox="0 0 8 7"><ellipse cx="4" cy="2.5" rx="2.6" ry="2.3" fill="#d4d4d4"/><path d="M2 3.8L0.7 6.6M4 4.2V6.6M6 3.8L7.3 6.6" stroke="#d4d4d4" stroke-width="1.3"/><rect x="1.8" y="3.6" width="4.4" height="1.4" fill="#d4d4d4"/><circle cx="2.8" cy="2.9" r="0.75" fill="#202020"/><circle cx="5.2" cy="2.9" r="0.75" fill="#202020"/></svg>
<svg style="left:217.8px;top:357.25px;" width="7" height="7" viewBox="0 0 7 7"><path d="M3.3 0.3L6.2 3.2L3.3 6.1L0.4 3.2Z" fill="#6a6a6a"/><ellipse cx="3.3" cy="3.2" rx="0.9" ry="0.7" fill="#262626"/></svg>
<svg style="left:226px;top:356.65px;" width="8" height="8" viewBox="0 0 8 8"><path d="M0.8 7L7.2 0.8" stroke="#d8d8d8" stroke-width="1"/></svg>
<svg style="left:235px;top:355.95px;" width="8" height="8.5" viewBox="0 0 8 8.5"><path d="M4.6 0.6Q3.2 0.2 2.8 2L1.6 7.8" fill="none" stroke="#cfcfcf" stroke-width="0.9"/><path d="M1.4 3.2H3.6" stroke="#cfcfcf" stroke-width="0.8"/><path d="M4 3.8L7 7.6M7 3.8L4 7.6" stroke="#cfcfcf" stroke-width="0.9"/></svg>
<div style="left:243.6px;top:356.25px;width:9px;height:8px;background:#2a2a2a;"></div>
<div style="left:253.1px;top:356.25px;width:8px;height:8px;background:#222222;"></div>
<div style="left:262.3px;top:356.25px;width:7.9px;height:8px;background:#222222;"></div>
<div style="left:271.4px;top:356.25px;width:7.6px;height:8px;background:#222222;"></div>
<div style="left:279.4px;top:356.25px;width:9.9px;height:8px;background:#2a2a2a;"></div>
<div style="left:290.2px;top:356.35px;width:40.5px;height:8.3px;background:#1c1c1c;"></div>
<div class="t" style="left:293.7px;top:358.00px;font-size:7.56px;color:#c9c9c9;transform:scaleX(0.9320);transform-origin:0 0;">Normal</div>
<svg style="left:324px;top:359.15px;" width="5.5" height="3.8" viewBox="0 0 5.5 3.8"><path d="M0.6 0.6L2.75 2.6999999999999997L4.9 0.6" fill="none" stroke="#9a9a9a" stroke-width="1.05"/></svg>
<div style="left:331.6px;top:355.65px;width:2px;height:9.2px;background:#2f2f2f;"></div>
<div style="left:334.8px;top:355.65px;width:6.9px;height:9.2px;background:#232323;"></div>
<div style="left:345.9px;top:356.25px;width:38.7px;height:8.3px;background:#1c1c1c;"></div>
<div class="t" style="left:349.6px;top:358.00px;font-size:7.56px;color:#c9c9c9;transform:scaleX(0.8800);transform-origin:0 0;">None</div>
<svg style="left:377.2px;top:359.15px;" width="5.5" height="3.8" viewBox="0 0 5.5 3.8"><path d="M0.6 0.6L2.75 2.6999999999999997L4.9 0.6" fill="none" stroke="#9a9a9a" stroke-width="1.05"/></svg>
<svg style="left:389.8px;top:356.15px;" width="9" height="8" viewBox="0 0 9 8"><path d="M7.6 2.2A3.7 3.5 0 1 1 5.6 0.5M5.6 0.5Q7.2 1.6 6.3 3.9A1.9 1.8 0 1 1 4.4 2.0" fill="none" stroke="#a8a8a8" stroke-width="0.85"/><circle cx="4.4" cy="3.9" r="0.5" fill="#a8a8a8"/></svg>
<div style="left:402.2px;top:356.25px;width:52.8px;height:8.3px;background:#1c1c1c;"></div>
<div class="t" style="left:405.8px;top:358.00px;font-size:7.56px;color:#c9c9c9;transform:scaleX(0.8800);transform-origin:0 0;">None</div>
<svg style="left:447.8px;top:359.15px;" width="5.5" height="3.8" viewBox="0 0 5.5 3.8"><path d="M0.6 0.6L2.75 2.6999999999999997L4.9 0.6" fill="none" stroke="#9a9a9a" stroke-width="1.05"/></svg>
<div style="left:473px;top:355.85px;width:267.2px;height:9px;background:#7d3c3e;"></div>
<div style="left:3px;top:365.9px;width:464.2px;height:9.2px;background:#2e2e2e;"></div>
<svg style="left:5.3px;top:368.1px;" width="9" height="5.5" viewBox="0 0 9 5.5"><path d="M0.6 2.7Q4.4 -1.4 8.2 2.7Q4.4 6.8 0.6 2.7Z" fill="#ececec" stroke="#111" stroke-width="0.4"/><circle cx="4.4" cy="2.7" r="1.25" fill="#1a1a1a"/></svg>
<div style="left:23.3px;top:366.5px;width:7.5px;height:8px;background:#222222;"></div>
<div style="left:32.7px;top:366.5px;width:7.1px;height:8px;background:#222222;"></div>
<svg style="left:46.3px;top:368.8px;" width="4.5" height="5.5" viewBox="0 0 4.5 5.5"><path d="M0.8 0.6L3.3 2.6L0.8 4.6" fill="none" stroke="#8c8c8c" stroke-width="0.95"/></svg>
<div style="left:52.7px;top:365.9px;width:10px;height:9.2px;background:#1f241f;"></div>
<div style="left:53.9px;top:367.0px;width:7.5px;height:7.5px;background:#c83a3a;"></div>
<div class="t" style="left:67px;top:367.00px;font-size:7.56px;color:#c9c9c9;transform:scaleX(0.6900);transform-origin:0 0;">5</div>
<svg style="left:84.8px;top:366.8px;" width="8" height="8" viewBox="0 0 8 8"><path d="M3.70 0.20 L4.67 2.57 L7.22 2.76 L5.27 4.41 L5.87 6.89 L3.70 5.55 L1.53 6.89 L2.13 4.41 L0.18 2.76 L2.73 2.57Z" fill="#e4e4e4"/></svg>
<div class="t" style="left:95.5px;top:367.00px;font-size:7.56px;color:#c9c9c9;transform:scaleX(0.9593);transform-origin:0 0;">R60</div>
<svg style="left:208.4px;top:367.3px;" width="8" height="7" viewBox="0 0 8 7"><ellipse cx="4" cy="2.5" rx="2.6" ry="2.3" fill="#d4d4d4"/><path d="M2 3.8L0.7 6.6M4 4.2V6.6M6 3.8L7.3 6.6" stroke="#d4d4d4" stroke-width="1.3"/><rect x="1.8" y="3.6" width="4.4" height="1.4" fill="#d4d4d4"/><circle cx="2.8" cy="2.9" r="0.75" fill="#202020"/><circle cx="5.2" cy="2.9" r="0.75" fill="#202020"/></svg>
<svg style="left:217.8px;top:367.5px;" width="7" height="7" viewBox="0 0 7 7"><path d="M3.3 0.3L6.2 3.2L3.3 6.1L0.4 3.2Z" fill="#6a6a6a"/><ellipse cx="3.3" cy="3.2" rx="0.9" ry="0.7" fill="#262626"/></svg>
<svg style="left:226px;top:366.9px;" width="8" height="8" viewBox="0 0 8 8"><path d="M0.8 7L7.2 0.8" stroke="#d8d8d8" stroke-width="1"/></svg>
<svg style="left:235px;top:366.2px;" width="8" height="8.5" viewBox="0 0 8 8.5"><path d="M4.6 0.6Q3.2 0.2 2.8 2L1.6 7.8" fill="none" stroke="#cfcfcf" stroke-width="0.9"/><path d="M1.4 3.2H3.6" stroke="#cfcfcf" stroke-width="0.8"/><path d="M4 3.8L7 7.6M7 3.8L4 7.6" stroke="#cfcfcf" stroke-width="0.9"/></svg>
<div style="left:243.6px;top:366.5px;width:9px;height:8px;background:#2a2a2a;"></div>
<div style="left:253.1px;top:366.5px;width:8px;height:8px;background:#222222;"></div>
<div style="left:262.3px;top:366.5px;width:7.9px;height:8px;background:#222222;"></div>
<div style="left:271.4px;top:366.5px;width:7.6px;height:8px;background:#222222;"></div>
<div style="left:279.4px;top:366.5px;width:9.9px;height:8px;background:#2a2a2a;"></div>
<div style="left:290.2px;top:366.6px;width:40.5px;height:8.3px;background:#1c1c1c;"></div>
<div class="t" style="left:293.7px;top:368.00px;font-size:7.56px;color:#c9c9c9;transform:scaleX(0.9320);transform-origin:0 0;">Normal</div>
<svg style="left:324px;top:369.4px;" width="5.5" height="3.8" viewBox="0 0 5.5 3.8"><path d="M0.6 0.6L2.75 2.6999999999999997L4.9 0.6" fill="none" stroke="#9a9a9a" stroke-width="1.05"/></svg>
<div style="left:331.6px;top:365.9px;width:2px;height:9.2px;background:#2f2f2f;"></div>
<div style="left:334.8px;top:365.9px;width:6.9px;height:9.2px;background:#232323;"></div>
<div style="left:345.9px;top:366.5px;width:38.7px;height:8.3px;background:#1c1c1c;"></div>
<div class="t" style="left:349.6px;top:368.00px;font-size:7.56px;color:#c9c9c9;transform:scaleX(0.8800);transform-origin:0 0;">None</div>
<svg style="left:377.2px;top:369.4px;" width="5.5" height="3.8" viewBox="0 0 5.5 3.8"><path d="M0.6 0.6L2.75 2.6999999999999997L4.9 0.6" fill="none" stroke="#9a9a9a" stroke-width="1.05"/></svg>
<svg style="left:389.8px;top:366.4px;" width="9" height="8" viewBox="0 0 9 8"><path d="M7.6 2.2A3.7 3.5 0 1 1 5.6 0.5M5.6 0.5Q7.2 1.6 6.3 3.9A1.9 1.8 0 1 1 4.4 2.0" fill="none" stroke="#a8a8a8" stroke-width="0.85"/><circle cx="4.4" cy="3.9" r="0.5" fill="#a8a8a8"/></svg>
<div style="left:402.2px;top:366.5px;width:52.8px;height:8.3px;background:#1c1c1c;"></div>
<div class="t" style="left:405.8px;top:368.00px;font-size:7.56px;color:#c9c9c9;transform:scaleX(0.8800);transform-origin:0 0;">None</div>
<svg style="left:447.8px;top:369.4px;" width="5.5" height="3.8" viewBox="0 0 5.5 3.8"><path d="M0.6 0.6L2.75 2.6999999999999997L4.9 0.6" fill="none" stroke="#9a9a9a" stroke-width="1.05"/></svg>
<div style="left:473px;top:366.1px;width:267.2px;height:9px;background:#7d3c3e;"></div>
<div style="left:3px;top:376.15px;width:464.2px;height:9.2px;background:#2e2e2e;"></div>
<svg style="left:5.3px;top:378.35px;" width="9" height="5.5" viewBox="0 0 9 5.5"><path d="M0.6 2.7Q4.4 -1.4 8.2 2.7Q4.4 6.8 0.6 2.7Z" fill="#ececec" stroke="#111" stroke-width="0.4"/><circle cx="4.4" cy="2.7" r="1.25" fill="#1a1a1a"/></svg>
<div style="left:23.3px;top:376.75px;width:7.5px;height:8px;background:#222222;"></div>
<div style="left:32.7px;top:376.75px;width:7.1px;height:8px;background:#222222;"></div>
<svg style="left:46.3px;top:379.05px;" width="4.5" height="5.5" viewBox="0 0 4.5 5.5"><path d="M0.8 0.6L3.3 2.6L0.8 4.6" fill="none" stroke="#8c8c8c" stroke-width="0.95"/></svg>
<div style="left:52.7px;top:376.15px;width:10px;height:9.2px;background:#1f241f;"></div>
<div style="left:53.9px;top:377.25px;width:7.5px;height:7.5px;background:#c83a3a;"></div>
<div class="t" style="left:67px;top:378.00px;font-size:7.56px;color:#c9c9c9;transform:scaleX(0.6900);transform-origin:0 0;">6</div>
<svg style="left:84.8px;top:377.05px;" width="8" height="8" viewBox="0 0 8 8"><path d="M3.70 0.20 L4.67 2.57 L7.22 2.76 L5.27 4.41 L5.87 6.89 L3.70 5.55 L1.53 6.89 L2.13 4.41 L0.18 2.76 L2.73 2.57Z" fill="#e4e4e4"/></svg>
<div class="t" style="left:95.5px;top:378.00px;font-size:7.56px;color:#c9c9c9;transform:scaleX(0.9593);transform-origin:0 0;">R20</div>
<svg style="left:208.4px;top:377.55px;" width="8" height="7" viewBox="0 0 8 7"><ellipse cx="4" cy="2.5" rx="2.6" ry="2.3" fill="#d4d4d4"/><path d="M2 3.8L0.7 6.6M4 4.2V6.6M6 3.8L7.3 6.6" stroke="#d4d4d4" stroke-width="1.3"/><rect x="1.8" y="3.6" width="4.4" height="1.4" fill="#d4d4d4"/><circle cx="2.8" cy="2.9" r="0.75" fill="#202020"/><circle cx="5.2" cy="2.9" r="0.75" fill="#202020"/></svg>
<svg style="left:217.8px;top:377.75px;" width="7" height="7" viewBox="0 0 7 7"><path d="M3.3 0.3L6.2 3.2L3.3 6.1L0.4 3.2Z" fill="#6a6a6a"/><ellipse cx="3.3" cy="3.2" rx="0.9" ry="0.7" fill="#262626"/></svg>
<svg style="left:226px;top:377.15px;" width="8" height="8" viewBox="0 0 8 8"><path d="M0.8 7L7.2 0.8" stroke="#d8d8d8" stroke-width="1"/></svg>
<svg style="left:235px;top:376.45px;" width="8" height="8.5" viewBox="0 0 8 8.5"><path d="M4.6 0.6Q3.2 0.2 2.8 2L1.6 7.8" fill="none" stroke="#cfcfcf" stroke-width="0.9"/><path d="M1.4 3.2H3.6" stroke="#cfcfcf" stroke-width="0.8"/><path d="M4 3.8L7 7.6M7 3.8L4 7.6" stroke="#cfcfcf" stroke-width="0.9"/></svg>
<div style="left:243.6px;top:376.75px;width:9px;height:8px;background:#2a2a2a;"></div>
<div style="left:253.1px;top:376.75px;width:8px;height:8px;background:#222222;"></div>
<div style="left:262.3px;top:376.75px;width:7.9px;height:8px;background:#222222;"></div>
<div style="left:271.4px;top:376.75px;width:7.6px;height:8px;background:#222222;"></div>
<div style="left:279.4px;top:376.75px;width:9.9px;height:8px;background:#2a2a2a;"></div>
<div style="left:290.2px;top:376.85px;width:40.5px;height:8.3px;background:#1c1c1c;"></div>
<div class="t" style="left:293.7px;top:378.00px;font-size:7.56px;color:#c9c9c9;transform:scaleX(0.9320);transform-origin:0 0;">Normal</div>
<svg style="left:324px;top:379.65px;" width="5.5" height="3.8" viewBox="0 0 5.5 3.8"><path d="M0.6 0.6L2.75 2.6999999999999997L4.9 0.6" fill="none" stroke="#9a9a9a" stroke-width="1.05"/></svg>
<div style="left:331.6px;top:376.15px;width:2px;height:9.2px;background:#2f2f2f;"></div>
<div style="left:334.8px;top:376.15px;width:6.9px;height:9.2px;background:#232323;"></div>
<div style="left:345.9px;top:376.75px;width:38.7px;height:8.3px;background:#1c1c1c;"></div>
<div class="t" style="left:349.6px;top:378.00px;font-size:7.56px;color:#c9c9c9;transform:scaleX(0.8800);transform-origin:0 0;">None</div>
<svg style="left:377.2px;top:379.65px;" width="5.5" height="3.8" viewBox="0 0 5.5 3.8"><path d="M0.6 0.6L2.75 2.6999999999999997L4.9 0.6" fill="none" stroke="#9a9a9a" stroke-width="1.05"/></svg>
<svg style="left:389.8px;top:376.65px;" width="9" height="8" viewBox="0 0 9 8"><path d="M7.6 2.2A3.7 3.5 0 1 1 5.6 0.5M5.6 0.5Q7.2 1.6 6.3 3.9A1.9 1.8 0 1 1 4.4 2.0" fill="none" stroke="#a8a8a8" stroke-width="0.85"/><circle cx="4.4" cy="3.9" r="0.5" fill="#a8a8a8"/></svg>
<div style="left:402.2px;top:376.75px;width:52.8px;height:8.3px;background:#1c1c1c;"></div>
<div class="t" style="left:405.8px;top:378.00px;font-size:7.56px;color:#c9c9c9;transform:scaleX(0.8800);transform-origin:0 0;">None</div>
<svg style="left:447.8px;top:379.65px;" width="5.5" height="3.8" viewBox="0 0 5.5 3.8"><path d="M0.6 0.6L2.75 2.6999999999999997L4.9 0.6" fill="none" stroke="#9a9a9a" stroke-width="1.05"/></svg>
<div style="left:473px;top:376.35px;width:267.2px;height:9px;background:#7d3c3e;"></div>
<div style="left:3px;top:386.4px;width:464.2px;height:9.2px;background:#2e2e2e;"></div>
<svg style="left:5.3px;top:388.6px;" width="9" height="5.5" viewBox="0 0 9 5.5"><path d="M0.6 2.7Q4.4 -1.4 8.2 2.7Q4.4 6.8 0.6 2.7Z" fill="#ececec" stroke="#111" stroke-width="0.4"/><circle cx="4.4" cy="2.7" r="1.25" fill="#1a1a1a"/></svg>
<div style="left:23.3px;top:387.0px;width:7.5px;height:8px;background:#222222;"></div>
<div style="left:32.7px;top:387.0px;width:7.1px;height:8px;background:#222222;"></div>
<svg style="left:46.3px;top:389.3px;" width="4.5" height="5.5" viewBox="0 0 4.5 5.5"><path d="M0.8 0.6L3.3 2.6L0.8 4.6" fill="none" stroke="#8c8c8c" stroke-width="0.95"/></svg>
<div style="left:52.7px;top:386.4px;width:10px;height:9.2px;background:#1f241f;"></div>
<div style="left:53.9px;top:387.5px;width:7.5px;height:7.5px;background:#f0960f;"></div>
<div class="t" style="left:67px;top:388.00px;font-size:7.56px;color:#c9c9c9;transform:scaleX(0.6900);transform-origin:0 0;">7</div>
<svg style="left:84.8px;top:387.3px;" width="8" height="8" viewBox="0 0 8 8"><path d="M3.70 0.20 L4.67 2.57 L7.22 2.76 L5.27 4.41 L5.87 6.89 L3.70 5.55 L1.53 6.89 L2.13 4.41 L0.18 2.76 L2.73 2.57Z" fill="#e4e4e4"/></svg>
<div class="t" style="left:95.5px;top:388.00px;font-size:7.56px;color:#c9c9c9;transform:scaleX(0.9087);transform-origin:0 0;">O100</div>
<svg style="left:208.4px;top:387.8px;" width="8" height="7" viewBox="0 0 8 7"><ellipse cx="4" cy="2.5" rx="2.6" ry="2.3" fill="#d4d4d4"/><path d="M2 3.8L0.7 6.6M4 4.2V6.6M6 3.8L7.3 6.6" stroke="#d4d4d4" stroke-width="1.3"/><rect x="1.8" y="3.6" width="4.4" height="1.4" fill="#d4d4d4"/><circle cx="2.8" cy="2.9" r="0.75" fill="#202020"/><circle cx="5.2" cy="2.9" r="0.75" fill="#202020"/></svg>
<svg style="left:217.8px;top:388.0px;" width="7" height="7" viewBox="0 0 7 7"><path d="M3.3 0.3L6.2 3.2L3.3 6.1L0.4 3.2Z" fill="#6a6a6a"/><ellipse cx="3.3" cy="3.2" rx="0.9" ry="0.7" fill="#262626"/></svg>
<svg style="left:226px;top:387.4px;" width="8" height="8" viewBox="0 0 8 8"><path d="M0.8 7L7.2 0.8" stroke="#d8d8d8" stroke-width="1"/></svg>
<svg style="left:235px;top:386.7px;" width="8" height="8.5" viewBox="0 0 8 8.5"><path d="M4.6 0.6Q3.2 0.2 2.8 2L1.6 7.8" fill="none" stroke="#cfcfcf" stroke-width="0.9"/><path d="M1.4 3.2H3.6" stroke="#cfcfcf" stroke-width="0.8"/><path d="M4 3.8L7 7.6M7 3.8L4 7.6" stroke="#cfcfcf" stroke-width="0.9"/></svg>
<div style="left:243.6px;top:387.0px;width:9px;height:8px;background:#2a2a2a;"></div>
<div style="left:253.1px;top:387.0px;width:8px;height:8px;background:#222222;"></div>
<div style="left:262.3px;top:387.0px;width:7.9px;height:8px;background:#222222;"></div>
<div style="left:271.4px;top:387.0px;width:7.6px;height:8px;background:#222222;"></div>
<div style="left:279.4px;top:387.0px;width:9.9px;height:8px;background:#2a2a2a;"></div>
<div style="left:290.2px;top:387.1px;width:40.5px;height:8.3px;background:#1c1c1c;"></div>
<div class="t" style="left:293.7px;top:388.00px;font-size:7.56px;color:#c9c9c9;transform:scaleX(0.9320);transform-origin:0 0;">Normal</div>
<svg style="left:324px;top:389.9px;" width="5.5" height="3.8" viewBox="0 0 5.5 3.8"><path d="M0.6 0.6L2.75 2.6999999999999997L4.9 0.6" fill="none" stroke="#9a9a9a" stroke-width="1.05"/></svg>
<div style="left:331.6px;top:386.4px;width:2px;height:9.2px;background:#2f2f2f;"></div>
<div style="left:334.8px;top:386.4px;width:6.9px;height:9.2px;background:#232323;"></div>
<div style="left:345.9px;top:387.0px;width:38.7px;height:8.3px;background:#1c1c1c;"></div>
<div class="t" style="left:349.6px;top:388.00px;font-size:7.56px;color:#c9c9c9;transform:scaleX(0.8800);transform-origin:0 0;">None</div>
<svg style="left:377.2px;top:389.9px;" width="5.5" height="3.8" viewBox="0 0 5.5 3.8"><path d="M0.6 0.6L2.75 2.6999999999999997L4.9 0.6" fill="none" stroke="#9a9a9a" stroke-width="1.05"/></svg>
<svg style="left:389.8px;top:386.9px;" width="9" height="8" viewBox="0 0 9 8"><path d="M7.6 2.2A3.7 3.5 0 1 1 5.6 0.5M5.6 0.5Q7.2 1.6 6.3 3.9A1.9 1.8 0 1 1 4.4 2.0" fill="none" stroke="#a8a8a8" stroke-width="0.85"/><circle cx="4.4" cy="3.9" r="0.5" fill="#a8a8a8"/></svg>
<div style="left:402.2px;top:387.0px;width:52.8px;height:8.3px;background:#1c1c1c;"></div>
<div class="t" style="left:405.8px;top:388.00px;font-size:7.56px;color:#c9c9c9;transform:scaleX(0.8800);transform-origin:0 0;">None</div>
<svg style="left:447.8px;top:389.9px;" width="5.5" height="3.8" viewBox="0 0 5.5 3.8"><path d="M0.6 0.6L2.75 2.6999999999999997L4.9 0.6" fill="none" stroke="#9a9a9a" stroke-width="1.05"/></svg>
<div style="left:473px;top:386.6px;width:267.2px;height:9px;background:#976a2c;"></div>
<div style="left:3px;top:396.65px;width:464.2px;height:9.2px;background:#2e2e2e;"></div>
<svg style="left:5.3px;top:398.85px;" width="9" height="5.5" viewBox="0 0 9 5.5"><path d="M0.6 2.7Q4.4 -1.4 8.2 2.7Q4.4 6.8 0.6 2.7Z" fill="#ececec" stroke="#111" stroke-width="0.4"/><circle cx="4.4" cy="2.7" r="1.25" fill="#1a1a1a"/></svg>
<div style="left:23.3px;top:397.25px;width:7.5px;height:8px;background:#222222;"></div>
<div style="left:32.7px;top:397.25px;width:7.1px;height:8px;background:#222222;"></div>
<svg style="left:46.3px;top:399.55px;" width="4.5" height="5.5" viewBox="0 0 4.5 5.5"><path d="M0.8 0.6L3.3 2.6L0.8 4.6" fill="none" stroke="#8c8c8c" stroke-width="0.95"/></svg>
<div style="left:52.7px;top:396.65px;width:10px;height:9.2px;background:#1f241f;"></div>
<div style="left:53.9px;top:397.75px;width:7.5px;height:7.5px;background:#f0960f;"></div>
<div class="t" style="left:67px;top:398.00px;font-size:7.56px;color:#c9c9c9;transform:scaleX(0.6900);transform-origin:0 0;">8</div>
<svg style="left:84.8px;top:397.55px;" width="8" height="8" viewBox="0 0 8 8"><path d="M3.70 0.20 L4.67 2.57 L7.22 2.76 L5.27 4.41 L5.87 6.89 L3.70 5.55 L1.53 6.89 L2.13 4.41 L0.18 2.76 L2.73 2.57Z" fill="#e4e4e4"/></svg>
<div class="t" style="left:95.5px;top:398.00px;font-size:7.56px;color:#c9c9c9;transform:scaleX(0.9451);transform-origin:0 0;">O60</div>
<svg style="left:208.4px;top:398.05px;" width="8" height="7" viewBox="0 0 8 7"><ellipse cx="4" cy="2.5" rx="2.6" ry="2.3" fill="#d4d4d4"/><path d="M2 3.8L0.7 6.6M4 4.2V6.6M6 3.8L7.3 6.6" stroke="#d4d4d4" stroke-width="1.3"/><rect x="1.8" y="3.6" width="4.4" height="1.4" fill="#d4d4d4"/><circle cx="2.8" cy="2.9" r="0.75" fill="#202020"/><circle cx="5.2" cy="2.9" r="0.75" fill="#202020"/></svg>
<svg style="left:217.8px;top:398.25px;" width="7" height="7" viewBox="0 0 7 7"><path d="M3.3 0.3L6.2 3.2L3.3 6.1L0.4 3.2Z" fill="#6a6a6a"/><ellipse cx="3.3" cy="3.2" rx="0.9" ry="0.7" fill="#262626"/></svg>
<svg style="left:226px;top:397.65px;" width="8" height="8" viewBox="0 0 8 8"><path d="M0.8 7L7.2 0.8" stroke="#d8d8d8" stroke-width="1"/></svg>
<svg style="left:235px;top:396.95px;" width="8" height="8.5" viewBox="0 0 8 8.5"><path d="M4.6 0.6Q3.2 0.2 2.8 2L1.6 7.8" fill="none" stroke="#cfcfcf" stroke-width="0.9"/><path d="M1.4 3.2H3.6" stroke="#cfcfcf" stroke-width="0.8"/><path d="M4 3.8L7 7.6M7 3.8L4 7.6" stroke="#cfcfcf" stroke-width="0.9"/></svg>
<div style="left:243.6px;top:397.25px;width:9px;height:8px;background:#2a2a2a;"></div>
<div style="left:253.1px;top:397.25px;width:8px;height:8px;background:#222222;"></div>
<div style="left:262.3px;top:397.25px;width:7.9px;height:8px;background:#222222;"></div>
<div style="left:271.4px;top:397.25px;width:7.6px;height:8px;background:#222222;"></div>
<div style="left:279.4px;top:397.25px;width:9.9px;height:8px;background:#2a2a2a;"></div>
<div style="left:290.2px;top:397.35px;width:40.5px;height:8.3px;background:#1c1c1c;"></div>
<div class="t" style="left:293.7px;top:399.00px;font-size:7.56px;color:#c9c9c9;transform:scaleX(0.9320);transform-origin:0 0;">Normal</div>
<svg style="left:324px;top:400.15px;" width="5.5" height="3.8" viewBox="0 0 5.5 3.8"><path d="M0.6 0.6L2.75 2.6999999999999997L4.9 0.6" fill="none" stroke="#9a9a9a" stroke-width="1.05"/></svg>
<div style="left:331.6px;top:396.65px;width:2px;height:9.2px;background:#2f2f2f;"></div>
<div style="left:334.8px;top:396.65px;width:6.9px;height:9.2px;background:#232323;"></div>
<div style="left:345.9px;top:397.25px;width:38.7px;height:8.3px;background:#1c1c1c;"></div>
<div class="t" style="left:349.6px;top:399.00px;font-size:7.56px;color:#c9c9c9;transform:scaleX(0.8800);transform-origin:0 0;">None</div>
<svg style="left:377.2px;top:400.15px;" width="5.5" height="3.8" viewBox="0 0 5.5 3.8"><path d="M0.6 0.6L2.75 2.6999999999999997L4.9 0.6" fill="none" stroke="#9a9a9a" stroke-width="1.05"/></svg>
<svg style="left:389.8px;top:397.15px;" width="9" height="8" viewBox="0 0 9 8"><path d="M7.6 2.2A3.7 3.5 0 1 1 5.6 0.5M5.6 0.5Q7.2 1.6 6.3 3.9A1.9 1.8 0 1 1 4.4 2.0" fill="none" stroke="#a8a8a8" stroke-width="0.85"/><circle cx="4.4" cy="3.9" r="0.5" fill="#a8a8a8"/></svg>
<div style="left:402.2px;top:397.25px;width:52.8px;height:8.3px;background:#1c1c1c;"></div>
<div class="t" style="left:405.8px;top:399.00px;font-size:7.56px;color:#c9c9c9;transform:scaleX(0.8800);transform-origin:0 0;">None</div>
<svg style="left:447.8px;top:400.15px;" width="5.5" height="3.8" viewBox="0 0 5.5 3.8"><path d="M0.6 0.6L2.75 2.6999999999999997L4.9 0.6" fill="none" stroke="#9a9a9a" stroke-width="1.05"/></svg>
<div style="left:473px;top:396.85px;width:267.2px;height:9px;background:#976a2c;"></div>
<div style="left:3px;top:406.9px;width:464.2px;height:9.2px;background:#2e2e2e;"></div>
<svg style="left:5.3px;top:409.1px;" width="9" height="5.5" viewBox="0 0 9 5.5"><path d="M0.6 2.7Q4.4 -1.4 8.2 2.7Q4.4 6.8 0.6 2.7Z" fill="#ececec" stroke="#111" stroke-width="0.4"/><circle cx="4.4" cy="2.7" r="1.25" fill="#1a1a1a"/></svg>
<div style="left:23.3px;top:407.5px;width:7.5px;height:8px;background:#222222;"></div>
<div style="left:32.7px;top:407.5px;width:7.1px;height:8px;background:#222222;"></div>
<svg style="left:46.3px;top:409.8px;" width="4.5" height="5.5" viewBox="0 0 4.5 5.5"><path d="M0.8 0.6L3.3 2.6L0.8 4.6" fill="none" stroke="#8c8c8c" stroke-width="0.95"/></svg>
<div style="left:52.7px;top:406.9px;width:10px;height:9.2px;background:#1f241f;"></div>
<div style="left:53.9px;top:408.0px;width:7.5px;height:7.5px;background:#f0960f;"></div>
<div class="t" style="left:67px;top:408.00px;font-size:7.56px;color:#c9c9c9;transform:scaleX(0.6900);transform-origin:0 0;">9</div>
<svg style="left:84.8px;top:407.8px;" width="8" height="8" viewBox="0 0 8 8"><path d="M3.70 0.20 L4.67 2.57 L7.22 2.76 L5.27 4.41 L5.87 6.89 L3.70 5.55 L1.53 6.89 L2.13 4.41 L0.18 2.76 L2.73 2.57Z" fill="#e4e4e4"/></svg>
<div class="t" style="left:95.5px;top:408.00px;font-size:7.56px;color:#c9c9c9;transform:scaleX(0.9451);transform-origin:0 0;">O20</div>
<svg style="left:208.4px;top:408.3px;" width="8" height="7" viewBox="0 0 8 7"><ellipse cx="4" cy="2.5" rx="2.6" ry="2.3" fill="#d4d4d4"/><path d="M2 3.8L0.7 6.6M4 4.2V6.6M6 3.8L7.3 6.6" stroke="#d4d4d4" stroke-width="1.3"/><rect x="1.8" y="3.6" width="4.4" height="1.4" fill="#d4d4d4"/><circle cx="2.8" cy="2.9" r="0.75" fill="#202020"/><circle cx="5.2" cy="2.9" r="0.75" fill="#202020"/></svg>
<svg style="left:217.8px;top:408.5px;" width="7" height="7" viewBox="0 0 7 7"><path d="M3.3 0.3L6.2 3.2L3.3 6.1L0.4 3.2Z" fill="#6a6a6a"/><ellipse cx="3.3" cy="3.2" rx="0.9" ry="0.7" fill="#262626"/></svg>
<svg style="left:226px;top:407.9px;" width="8" height="8" viewBox="0 0 8 8"><path d="M0.8 7L7.2 0.8" stroke="#d8d8d8" stroke-width="1"/></svg>
<svg style="left:235px;top:407.2px;" width="8" height="8.5" viewBox="0 0 8 8.5"><path d="M4.6 0.6Q3.2 0.2 2.8 2L1.6 7.8" fill="none" stroke="#cfcfcf" stroke-width="0.9"/><path d="M1.4 3.2H3.6" stroke="#cfcfcf" stroke-width="0.8"/><path d="M4 3.8L7 7.6M7 3.8L4 7.6" stroke="#cfcfcf" stroke-width="0.9"/></svg>
<div style="left:243.6px;top:407.5px;width:9px;height:8px;background:#2a2a2a;"></div>
<div style="left:253.1px;top:407.5px;width:8px;height:8px;background:#222222;"></div>
<div style="left:262.3px;top:407.5px;width:7.9px;height:8px;background:#222222;"></div>
<div style="left:271.4px;top:407.5px;width:7.6px;height:8px;background:#222222;"></div>
<div style="left:279.4px;top:407.5px;width:9.9px;height:8px;background:#2a2a2a;"></div>
<div style="left:290.2px;top:407.6px;width:40.5px;height:8.3px;background:#1c1c1c;"></div>
<div class="t" style="left:293.7px;top:409.00px;font-size:7.56px;color:#c9c9c9;transform:scaleX(0.9320);transform-origin:0 0;">Normal</div>
<svg style="left:324px;top:410.4px;" width="5.5" height="3.8" viewBox="0 0 5.5 3.8"><path d="M0.6 0.6L2.75 2.6999999999999997L4.9 0.6" fill="none" stroke="#9a9a9a" stroke-width="1.05"/></svg>
<div style="left:331.6px;top:406.9px;width:2px;height:9.2px;background:#2f2f2f;"></div>
<div style="left:334.8px;top:406.9px;width:6.9px;height:9.2px;background:#232323;"></div>
<div style="left:345.9px;top:407.5px;width:38.7px;height:8.3px;background:#1c1c1c;"></div>
<div class="t" style="left:349.6px;top:409.00px;font-size:7.56px;color:#c9c9c9;transform:scaleX(0.8800);transform-origin:0 0;">None</div>
<svg style="left:377.2px;top:410.4px;" width="5.5" height="3.8" viewBox="0 0 5.5 3.8"><path d="M0.6 0.6L2.75 2.6999999999999997L4.9 0.6" fill="none" stroke="#9a9a9a" stroke-width="1.05"/></svg>
<svg style="left:389.8px;top:407.4px;" width="9" height="8" viewBox="0 0 9 8"><path d="M7.6 2.2A3.7 3.5 0 1 1 5.6 0.5M5.6 0.5Q7.2 1.6 6.3 3.9A1.9 1.8 0 1 1 4.4 2.0" fill="none" stroke="#a8a8a8" stroke-width="0.85"/><circle cx="4.4" cy="3.9" r="0.5" fill="#a8a8a8"/></svg>
<div style="left:402.2px;top:407.5px;width:52.8px;height:8.3px;background:#1c1c1c;"></div>
<div class="t" style="left:405.8px;top:409.00px;font-size:7.56px;color:#c9c9c9;transform:scaleX(0.8800);transform-origin:0 0;">None</div>
<svg style="left:447.8px;top:410.4px;" width="5.5" height="3.8" viewBox="0 0 5.5 3.8"><path d="M0.6 0.6L2.75 2.6999999999999997L4.9 0.6" fill="none" stroke="#9a9a9a" stroke-width="1.05"/></svg>
<div style="left:473px;top:407.1px;width:267.2px;height:9px;background:#976a2c;"></div>
<div style="left:3px;top:417.15px;width:464.2px;height:9.2px;background:#2e2e2e;"></div>
<svg style="left:5.3px;top:419.35px;" width="9" height="5.5" viewBox="0 0 9 5.5"><path d="M0.6 2.7Q4.4 -1.4 8.2 2.7Q4.4 6.8 0.6 2.7Z" fill="#ececec" stroke="#111" stroke-width="0.4"/><circle cx="4.4" cy="2.7" r="1.25" fill="#1a1a1a"/></svg>
<div style="left:23.3px;top:417.75px;width:7.5px;height:8px;background:#222222;"></div>
<div style="left:32.7px;top:417.75px;width:7.1px;height:8px;background:#222222;"></div>
<svg style="left:46.3px;top:420.05px;" width="4.5" height="5.5" viewBox="0 0 4.5 5.5"><path d="M0.8 0.6L3.3 2.6L0.8 4.6" fill="none" stroke="#8c8c8c" stroke-width="0.95"/></svg>
<div style="left:52.7px;top:417.15px;width:10px;height:9.2px;background:#1f241f;"></div>
<div style="left:53.9px;top:418.25px;width:7.5px;height:7.5px;background:#e8de50;"></div>
<div class="t" style="left:67px;top:419.00px;font-size:7.56px;color:#c9c9c9;transform:scaleX(0.9755);transform-origin:0 0;">10</div>
<svg style="left:84.8px;top:418.05px;" width="8" height="8" viewBox="0 0 8 8"><path d="M3.70 0.20 L4.67 2.57 L7.22 2.76 L5.27 4.41 L5.87 6.89 L3.70 5.55 L1.53 6.89 L2.13 4.41 L0.18 2.76 L2.73 2.57Z" fill="#e4e4e4"/></svg>
<div class="t" style="left:95.5px;top:419.00px;font-size:7.56px;color:#c9c9c9;transform:scaleX(0.9178);transform-origin:0 0;">Y100</div>
<svg style="left:208.4px;top:418.55px;" width="8" height="7" viewBox="0 0 8 7"><ellipse cx="4" cy="2.5" rx="2.6" ry="2.3" fill="#d4d4d4"/><path d="M2 3.8L0.7 6.6M4 4.2V6.6M6 3.8L7.3 6.6" stroke="#d4d4d4" stroke-width="1.3"/><rect x="1.8" y="3.6" width="4.4" height="1.4" fill="#d4d4d4"/><circle cx="2.8" cy="2.9" r="0.75" fill="#202020"/><circle cx="5.2" cy="2.9" r="0.75" fill="#202020"/></svg>
<svg style="left:217.8px;top:418.75px;" width="7" height="7" viewBox="0 0 7 7"><path d="M3.3 0.3L6.2 3.2L3.3 6.1L0.4 3.2Z" fill="#6a6a6a"/><ellipse cx="3.3" cy="3.2" rx="0.9" ry="0.7" fill="#262626"/></svg>
<svg style="left:226px;top:418.15px;" width="8" height="8" viewBox="0 0 8 8"><path d="M0.8 7L7.2 0.8" stroke="#d8d8d8" stroke-width="1"/></svg>
<svg style="left:235px;top:417.45px;" width="8" height="8.5" viewBox="0 0 8 8.5"><path d="M4.6 0.6Q3.2 0.2 2.8 2L1.6 7.8" fill="none" stroke="#cfcfcf" stroke-width="0.9"/><path d="M1.4 3.2H3.6" stroke="#cfcfcf" stroke-width="0.8"/><path d="M4 3.8L7 7.6M7 3.8L4 7.6" stroke="#cfcfcf" stroke-width="0.9"/></svg>
<div style="left:243.6px;top:417.75px;width:9px;height:8px;background:#2a2a2a;"></div>
<div style="left:253.1px;top:417.75px;width:8px;height:8px;background:#222222;"></div>
<div style="left:262.3px;top:417.75px;width:7.9px;height:8px;background:#222222;"></div>
<div style="left:271.4px;top:417.75px;width:7.6px;height:8px;background:#222222;"></div>
<div style="left:279.4px;top:417.75px;width:9.9px;height:8px;background:#2a2a2a;"></div>
<div style="left:290.2px;top:417.85px;width:40.5px;height:8.3px;background:#1c1c1c;"></div>
<div class="t" style="left:293.7px;top:419.00px;font-size:7.56px;color:#c9c9c9;transform:scaleX(0.9320);transform-origin:0 0;">Normal</div>
<svg style="left:324px;top:420.65px;" width="5.5" height="3.8" viewBox="0 0 5.5 3.8"><path d="M0.6 0.6L2.75 2.6999999999999997L4.9 0.6" fill="none" stroke="#9a9a9a" stroke-width="1.05"/></svg>
<div style="left:331.6px;top:417.15px;width:2px;height:9.2px;background:#2f2f2f;"></div>
<div style="left:334.8px;top:417.15px;width:6.9px;height:9.2px;background:#232323;"></div>
<div style="left:345.9px;top:417.75px;width:38.7px;height:8.3px;background:#1c1c1c;"></div>
<div class="t" style="left:349.6px;top:419.00px;font-size:7.56px;color:#c9c9c9;transform:scaleX(0.8800);transform-origin:0 0;">None</div>
<svg style="left:377.2px;top:420.65px;" width="5.5" height="3.8" viewBox="0 0 5.5 3.8"><path d="M0.6 0.6L2.75 2.6999999999999997L4.9 0.6" fill="none" stroke="#9a9a9a" stroke-width="1.05"/></svg>
<svg style="left:389.8px;top:417.65px;" width="9" height="8" viewBox="0 0 9 8"><path d="M7.6 2.2A3.7 3.5 0 1 1 5.6 0.5M5.6 0.5Q7.2 1.6 6.3 3.9A1.9 1.8 0 1 1 4.4 2.0" fill="none" stroke="#a8a8a8" stroke-width="0.85"/><circle cx="4.4" cy="3.9" r="0.5" fill="#a8a8a8"/></svg>
<div style="left:402.2px;top:417.75px;width:52.8px;height:8.3px;background:#1c1c1c;"></div>
<div class="t" style="left:405.8px;top:419.00px;font-size:7.56px;color:#c9c9c9;transform:scaleX(0.8800);transform-origin:0 0;">None</div>
<svg style="left:447.8px;top:420.65px;" width="5.5" height="3.8" viewBox="0 0 5.5 3.8"><path d="M0.6 0.6L2.75 2.6999999999999997L4.9 0.6" fill="none" stroke="#9a9a9a" stroke-width="1.05"/></svg>
<div style="left:473px;top:417.35px;width:267.2px;height:9px;background:#928d4c;"></div>
<div style="left:3px;top:427.4px;width:464.2px;height:9.2px;background:#2e2e2e;"></div>
<svg style="left:5.3px;top:429.6px;" width="9" height="5.5" viewBox="0 0 9 5.5"><path d="M0.6 2.7Q4.4 -1.4 8.2 2.7Q4.4 6.8 0.6 2.7Z" fill="#ececec" stroke="#111" stroke-width="0.4"/><circle cx="4.4" cy="2.7" r="1.25" fill="#1a1a1a"/></svg>
<div style="left:23.3px;top:428.0px;width:7.5px;height:8px;background:#222222;"></div>
<div style="left:32.7px;top:428.0px;width:7.1px;height:8px;background:#222222;"></div>
<svg style="left:46.3px;top:430.3px;" width="4.5" height="5.5" viewBox="0 0 4.5 5.5"><path d="M0.8 0.6L3.3 2.6L0.8 4.6" fill="none" stroke="#8c8c8c" stroke-width="0.95"/></svg>
<div style="left:52.7px;top:427.4px;width:10px;height:9.2px;background:#1f241f;"></div>
<div style="left:53.9px;top:428.5px;width:7.5px;height:7.5px;background:#e8de50;"></div>
<div class="t" style="left:67px;top:429.00px;font-size:7.56px;color:#c9c9c9;transform:scaleX(1.0452);transform-origin:0 0;">11</div>
<svg style="left:84.8px;top:428.3px;" width="8" height="8" viewBox="0 0 8 8"><path d="M3.70 0.20 L4.67 2.57 L7.22 2.76 L5.27 4.41 L5.87 6.89 L3.70 5.55 L1.53 6.89 L2.13 4.41 L0.18 2.76 L2.73 2.57Z" fill="#e4e4e4"/></svg>
<div class="t" style="left:95.5px;top:429.00px;font-size:7.56px;color:#c9c9c9;transform:scaleX(0.9667);transform-origin:0 0;">Y60</div>
<svg style="left:208.4px;top:428.8px;" width="8" height="7" viewBox="0 0 8 7"><ellipse cx="4" cy="2.5" rx="2.6" ry="2.3" fill="#d4d4d4"/><path d="M2 3.8L0.7 6.6M4 4.2V6.6M6 3.8L7.3 6.6" stroke="#d4d4d4" stroke-width="1.3"/><rect x="1.8" y="3.6" width="4.4" height="1.4" fill="#d4d4d4"/><circle cx="2.8" cy="2.9" r="0.75" fill="#202020"/><circle cx="5.2" cy="2.9" r="0.75" fill="#202020"/></svg>
<svg style="left:217.8px;top:429.0px;" width="7" height="7" viewBox="0 0 7 7"><path d="M3.3 0.3L6.2 3.2L3.3 6.1L0.4 3.2Z" fill="#6a6a6a"/><ellipse cx="3.3" cy="3.2" rx="0.9" ry="0.7" fill="#262626"/></svg>
<svg style="left:226px;top:428.4px;" width="8" height="8" viewBox="0 0 8 8"><path d="M0.8 7L7.2 0.8" stroke="#d8d8d8" stroke-width="1"/></svg>
<svg style="left:235px;top:427.7px;" width="8" height="8.5" viewBox="0 0 8 8.5"><path d="M4.6 0.6Q3.2 0.2 2.8 2L1.6 7.8" fill="none" stroke="#cfcfcf" stroke-width="0.9"/><path d="M1.4 3.2H3.6" stroke="#cfcfcf" stroke-width="0.8"/><path d="M4 3.8L7 7.6M7 3.8L4 7.6" stroke="#cfcfcf" stroke-width="0.9"/></svg>
<div style="left:243.6px;top:428.0px;width:9px;height:8px;background:#2a2a2a;"></div>
<div style="left:253.1px;top:428.0px;width:8px;height:8px;background:#222222;"></div>
<div style="left:262.3px;top:428.0px;width:7.9px;height:8px;background:#222222;"></div>
<div style="left:271.4px;top:428.0px;width:7.6px;height:8px;background:#222222;"></div>
<div style="left:279.4px;top:428.0px;width:9.9px;height:8px;background:#2a2a2a;"></div>
<div style="left:290.2px;top:428.1px;width:40.5px;height:8.3px;background:#1c1c1c;"></div>
<div class="t" style="left:293.7px;top:429.00px;font-size:7.56px;color:#c9c9c9;transform:scaleX(0.9320);transform-origin:0 0;">Normal</div>
<svg style="left:324px;top:430.9px;" width="5.5" height="3.8" viewBox="0 0 5.5 3.8"><path d="M0.6 0.6L2.75 2.6999999999999997L4.9 0.6" fill="none" stroke="#9a9a9a" stroke-width="1.05"/></svg>
<div style="left:331.6px;top:427.4px;width:2px;height:9.2px;background:#2f2f2f;"></div>
<div style="left:334.8px;top:427.4px;width:6.9px;height:9.2px;background:#232323;"></div>
<div style="left:345.9px;top:428.0px;width:38.7px;height:8.3px;background:#1c1c1c;"></div>
<div class="t" style="left:349.6px;top:429.00px;font-size:7.56px;color:#c9c9c9;transform:scaleX(0.8800);transform-origin:0 0;">None</div>
<svg style="left:377.2px;top:430.9px;" width="5.5" height="3.8" viewBox="0 0 5.5 3.8"><path d="M0.6 0.6L2.75 2.6999999999999997L4.9 0.6" fill="none" stroke="#9a9a9a" stroke-width="1.05"/></svg>
<svg style="left:389.8px;top:427.9px;" width="9" height="8" viewBox="0 0 9 8"><path d="M7.6 2.2A3.7 3.5 0 1 1 5.6 0.5M5.6 0.5Q7.2 1.6 6.3 3.9A1.9 1.8 0 1 1 4.4 2.0" fill="none" stroke="#a8a8a8" stroke-width="0.85"/><circle cx="4.4" cy="3.9" r="0.5" fill="#a8a8a8"/></svg>
<div style="left:402.2px;top:428.0px;width:52.8px;height:8.3px;background:#1c1c1c;"></div>
<div class="t" style="left:405.8px;top:429.00px;font-size:7.56px;color:#c9c9c9;transform:scaleX(0.8800);transform-origin:0 0;">None</div>
<svg style="left:447.8px;top:430.9px;" width="5.5" height="3.8" viewBox="0 0 5.5 3.8"><path d="M0.6 0.6L2.75 2.6999999999999997L4.9 0.6" fill="none" stroke="#9a9a9a" stroke-width="1.05"/></svg>
<div style="left:473px;top:427.6px;width:267.2px;height:9px;background:#928d4c;"></div>
<div style="left:3px;top:437.65px;width:464.2px;height:9.2px;background:#2e2e2e;"></div>
<svg style="left:5.3px;top:439.85px;" width="9" height="5.5" viewBox="0 0 9 5.5"><path d="M0.6 2.7Q4.4 -1.4 8.2 2.7Q4.4 6.8 0.6 2.7Z" fill="#ececec" stroke="#111" stroke-width="0.4"/><circle cx="4.4" cy="2.7" r="1.25" fill="#1a1a1a"/></svg>
<div style="left:23.3px;top:438.25px;width:7.5px;height:8px;background:#222222;"></div>
<div style="left:32.7px;top:438.25px;width:7.1px;height:8px;background:#222222;"></div>
<svg style="left:46.3px;top:440.55px;" width="4.5" height="5.5" viewBox="0 0 4.5 5.5"><path d="M0.8 0.6L3.3 2.6L0.8 4.6" fill="none" stroke="#8c8c8c" stroke-width="0.95"/></svg>
<div style="left:52.7px;top:437.65px;width:10px;height:9.2px;background:#1f241f;"></div>
<div style="left:53.9px;top:438.75px;width:7.5px;height:7.5px;background:#e8de50;"></div>
<div class="t" style="left:67px;top:439.00px;font-size:7.56px;color:#c9c9c9;transform:scaleX(0.9755);transform-origin:0 0;">12</div>
<svg style="left:84.8px;top:438.55px;" width="8" height="8" viewBox="0 0 8 8"><path d="M3.70 0.20 L4.67 2.57 L7.22 2.76 L5.27 4.41 L5.87 6.89 L3.70 5.55 L1.53 6.89 L2.13 4.41 L0.18 2.76 L2.73 2.57Z" fill="#e4e4e4"/></svg>
<div class="t" style="left:95.5px;top:439.00px;font-size:7.56px;color:#c9c9c9;transform:scaleX(0.9667);transform-origin:0 0;">Y20</div>
<svg style="left:208.4px;top:439.05px;" width="8" height="7" viewBox="0 0 8 7"><ellipse cx="4" cy="2.5" rx="2.6" ry="2.3" fill="#d4d4d4"/><path d="M2 3.8L0.7 6.6M4 4.2V6.6M6 3.8L7.3 6.6" stroke="#d4d4d4" stroke-width="1.3"/><rect x="1.8" y="3.6" width="4.4" height="1.4" fill="#d4d4d4"/><circle cx="2.8" cy="2.9" r="0.75" fill="#202020"/><circle cx="5.2" cy="2.9" r="0.75" fill="#202020"/></svg>
<svg style="left:217.8px;top:439.25px;" width="7" height="7" viewBox="0 0 7 7"><path d="M3.3 0.3L6.2 3.2L3.3 6.1L0.4 3.2Z" fill="#6a6a6a"/><ellipse cx="3.3" cy="3.2" rx="0.9" ry="0.7" fill="#262626"/></svg>
<svg style="left:226px;top:438.65px;" width="8" height="8" viewBox="0 0 8 8"><path d="M0.8 7L7.2 0.8" stroke="#d8d8d8" stroke-width="1"/></svg>
<svg style="left:235px;top:437.95px;" width="8" height="8.5" viewBox="0 0 8 8.5"><path d="M4.6 0.6Q3.2 0.2 2.8 2L1.6 7.8" fill="none" stroke="#cfcfcf" stroke-width="0.9"/><path d="M1.4 3.2H3.6" stroke="#cfcfcf" stroke-width="0.8"/><path d="M4 3.8L7 7.6M7 3.8L4 7.6" stroke="#cfcfcf" stroke-width="0.9"/></svg>
<div style="left:243.6px;top:438.25px;width:9px;height:8px;background:#2a2a2a;"></div>
<div style="left:253.1px;top:438.25px;width:8px;height:8px;background:#222222;"></div>
<div style="left:262.3px;top:438.25px;width:7.9px;height:8px;background:#222222;"></div>
<div style="left:271.4px;top:438.25px;width:7.6px;height:8px;background:#222222;"></div>
<div style="left:279.4px;top:438.25px;width:9.9px;height:8px;background:#2a2a2a;"></div>
<div style="left:290.2px;top:438.35px;width:40.5px;height:8.3px;background:#1c1c1c;"></div>
<div class="t" style="left:293.7px;top:440.00px;font-size:7.56px;color:#c9c9c9;transform:scaleX(0.9320);transform-origin:0 0;">Normal</div>
<svg style="left:324px;top:441.15px;" width="5.5" height="3.8" viewBox="0 0 5.5 3.8"><path d="M0.6 0.6L2.75 2.6999999999999997L4.9 0.6" fill="none" stroke="#9a9a9a" stroke-width="1.05"/></svg>
<div style="left:331.6px;top:437.65px;width:2px;height:9.2px;background:#2f2f2f;"></div>
<div style="left:334.8px;top:437.65px;width:6.9px;height:9.2px;background:#232323;"></div>
<div style="left:345.9px;top:438.25px;width:38.7px;height:8.3px;background:#1c1c1c;"></div>
<div class="t" style="left:349.6px;top:440.00px;font-size:7.56px;color:#c9c9c9;transform:scaleX(0.8800);transform-origin:0 0;">None</div>
<svg style="left:377.2px;top:441.15px;" width="5.5" height="3.8" viewBox="0 0 5.5 3.8"><path d="M0.6 0.6L2.75 2.6999999999999997L4.9 0.6" fill="none" stroke="#9a9a9a" stroke-width="1.05"/></svg>
<svg style="left:389.8px;top:438.15px;" width="9" height="8" viewBox="0 0 9 8"><path d="M7.6 2.2A3.7 3.5 0 1 1 5.6 0.5M5.6 0.5Q7.2 1.6 6.3 3.9A1.9 1.8 0 1 1 4.4 2.0" fill="none" stroke="#a8a8a8" stroke-width="0.85"/><circle cx="4.4" cy="3.9" r="0.5" fill="#a8a8a8"/></svg>
<div style="left:402.2px;top:438.25px;width:52.8px;height:8.3px;background:#1c1c1c;"></div>
<div class="t" style="left:405.8px;top:440.00px;font-size:7.56px;color:#c9c9c9;transform:scaleX(0.8800);transform-origin:0 0;">None</div>
<svg style="left:447.8px;top:441.15px;" width="5.5" height="3.8" viewBox="0 0 5.5 3.8"><path d="M0.6 0.6L2.75 2.6999999999999997L4.9 0.6" fill="none" stroke="#9a9a9a" stroke-width="1.05"/></svg>
<div style="left:473px;top:437.85px;width:267.2px;height:9px;background:#928d4c;"></div>
<div style="left:3px;top:447.9px;width:464.2px;height:9.2px;background:#2e2e2e;"></div>
<svg style="left:5.3px;top:450.1px;" width="9" height="5.5" viewBox="0 0 9 5.5"><path d="M0.6 2.7Q4.4 -1.4 8.2 2.7Q4.4 6.8 0.6 2.7Z" fill="#ececec" stroke="#111" stroke-width="0.4"/><circle cx="4.4" cy="2.7" r="1.25" fill="#1a1a1a"/></svg>
<div style="left:23.3px;top:448.5px;width:7.5px;height:8px;background:#222222;"></div>
<div style="left:32.7px;top:448.5px;width:7.1px;height:8px;background:#222222;"></div>
<svg style="left:46.3px;top:450.8px;" width="4.5" height="5.5" viewBox="0 0 4.5 5.5"><path d="M0.8 0.6L3.3 2.6L0.8 4.6" fill="none" stroke="#8c8c8c" stroke-width="0.95"/></svg>
<div style="left:52.7px;top:447.9px;width:10px;height:9.2px;background:#1f241f;"></div>
<div style="left:53.9px;top:449.0px;width:7.5px;height:7.5px;background:#6d82e8;"></div>
<div class="t" style="left:67px;top:449.00px;font-size:7.56px;color:#c9c9c9;transform:scaleX(0.9755);transform-origin:0 0;">13</div>
<svg style="left:84.8px;top:448.8px;" width="8" height="8" viewBox="0 0 8 8"><path d="M3.70 0.20 L4.67 2.57 L7.22 2.76 L5.27 4.41 L5.87 6.89 L3.70 5.55 L1.53 6.89 L2.13 4.41 L0.18 2.76 L2.73 2.57Z" fill="#e4e4e4"/></svg>
<div class="t" style="left:95.5px;top:449.00px;font-size:7.56px;color:#c9c9c9;transform:scaleX(0.8182);transform-origin:0 0;">Background</div>
<svg style="left:208.4px;top:449.3px;" width="8" height="7" viewBox="0 0 8 7"><ellipse cx="4" cy="2.5" rx="2.6" ry="2.3" fill="#d4d4d4"/><path d="M2 3.8L0.7 6.6M4 4.2V6.6M6 3.8L7.3 6.6" stroke="#d4d4d4" stroke-width="1.3"/><rect x="1.8" y="3.6" width="4.4" height="1.4" fill="#d4d4d4"/><circle cx="2.8" cy="2.9" r="0.75" fill="#202020"/><circle cx="5.2" cy="2.9" r="0.75" fill="#202020"/></svg>
<svg style="left:217.8px;top:449.5px;" width="7" height="7" viewBox="0 0 7 7"><path d="M3.3 0.3L6.2 3.2L3.3 6.1L0.4 3.2Z" fill="#6a6a6a"/><ellipse cx="3.3" cy="3.2" rx="0.9" ry="0.7" fill="#262626"/></svg>
<svg style="left:226px;top:448.9px;" width="8" height="8" viewBox="0 0 8 8"><path d="M0.8 7L7.2 0.8" stroke="#d8d8d8" stroke-width="1"/></svg>
<div style="left:243.6px;top:448.5px;width:9px;height:8px;background:#2a2a2a;"></div>
<div style="left:253.1px;top:448.5px;width:8px;height:8px;background:#222222;"></div>
<div style="left:262.3px;top:448.5px;width:7.9px;height:8px;background:#222222;"></div>
<div style="left:271.4px;top:448.5px;width:7.6px;height:8px;background:#222222;"></div>
<div style="left:279.4px;top:448.5px;width:9.9px;height:8px;background:#2a2a2a;"></div>
<div style="left:290.2px;top:448.6px;width:40.5px;height:8.3px;background:#1c1c1c;"></div>
<div class="t" style="left:293.7px;top:450.00px;font-size:7.56px;color:#c9c9c9;transform:scaleX(0.9320);transform-origin:0 0;">Normal</div>
<svg style="left:324px;top:451.4px;" width="5.5" height="3.8" viewBox="0 0 5.5 3.8"><path d="M0.6 0.6L2.75 2.6999999999999997L4.9 0.6" fill="none" stroke="#9a9a9a" stroke-width="1.05"/></svg>
<div style="left:331.6px;top:447.9px;width:2px;height:9.2px;background:#2f2f2f;"></div>
<div style="left:334.8px;top:447.9px;width:6.9px;height:9.2px;background:#232323;"></div>
<div style="left:345.9px;top:448.5px;width:38.7px;height:8.3px;background:#1c1c1c;"></div>
<div class="t" style="left:349.6px;top:450.00px;font-size:7.56px;color:#c9c9c9;transform:scaleX(0.8800);transform-origin:0 0;">None</div>
<svg style="left:377.2px;top:451.4px;" width="5.5" height="3.8" viewBox="0 0 5.5 3.8"><path d="M0.6 0.6L2.75 2.6999999999999997L4.9 0.6" fill="none" stroke="#9a9a9a" stroke-width="1.05"/></svg>
<svg style="left:389.8px;top:448.4px;" width="9" height="8" viewBox="0 0 9 8"><path d="M7.6 2.2A3.7 3.5 0 1 1 5.6 0.5M5.6 0.5Q7.2 1.6 6.3 3.9A1.9 1.8 0 1 1 4.4 2.0" fill="none" stroke="#a8a8a8" stroke-width="0.85"/><circle cx="4.4" cy="3.9" r="0.5" fill="#a8a8a8"/></svg>
<div style="left:402.2px;top:448.5px;width:52.8px;height:8.3px;background:#1c1c1c;"></div>
<div class="t" style="left:405.8px;top:450.00px;font-size:7.56px;color:#c9c9c9;transform:scaleX(0.8800);transform-origin:0 0;">None</div>
<svg style="left:447.8px;top:451.4px;" width="5.5" height="3.8" viewBox="0 0 5.5 3.8"><path d="M0.6 0.6L2.75 2.6999999999999997L4.9 0.6" fill="none" stroke="#9a9a9a" stroke-width="1.05"/></svg>
<div style="left:473px;top:448.1px;width:267.2px;height:9px;background:#56669c;"></div>
<div style="left:472px;top:312px;width:1.1px;height:223px;background:#2d8ceb;"></div>
<svg style="left:467.8px;top:302.8px;" width="10" height="10" viewBox="0 0 10 10"><path d="M0.5 0.5H9L9 3.2L4.75 9.2L0.5 3.2Z" fill="#2d8ceb" stroke="#1a1a1a" stroke-width="0.3"/><path d="M2.2 1.6H7.3L4.75 4.6Z" fill="#6ab4f6"/></svg>
<div style="left:3px;top:535px;width:751px;height:1.2px;background:#181818;"></div>
<div style="left:3px;top:536.2px;width:751px;height:9px;background:#232323;"></div>
<div style="left:467.2px;top:535px;width:65.5px;height:1.2px;background:#1a1a1a;"></div>
<svg style="left:5.5px;top:537px;" width="10" height="9" viewBox="0 0 10 9"><rect x="1.4" y="1.6" width="6.4" height="5" rx="2" fill="#2d8ceb" transform="rotate(35 4.6 4.1)"/><circle cx="6.6" cy="6.4" r="1.3" fill="#1e1e1e" stroke="#2d8ceb" stroke-width="0.7"/></svg>
<svg style="left:16.5px;top:536.8px;" width="9" height="9" viewBox="0 0 9 9"><rect x="0.8" y="0.8" width="4.6" height="4.6" rx="1.8" fill="none" stroke="#2d8ceb" stroke-width="1.1" transform="rotate(20 3 3)"/><rect x="3.4" y="3.4" width="4.6" height="4.6" rx="1.8" fill="none" stroke="#2d8ceb" stroke-width="1.1" transform="rotate(20 5.7 5.7)"/></svg>
<svg style="left:27.8px;top:537.5px;" width="8" height="8" viewBox="0 0 8 8"><path d="M2.6 0.8L0.8 3.8L2.6 6.8H5.4L7.2 3.8L5.4 0.8Z" fill="none" stroke="#d8d8d8" stroke-width="1.1" stroke-dasharray="1.6 0.6"/><circle cx="4" cy="3.8" r="0.8" fill="#9a9a9a"/></svg>
<svg style="left:470.5px;top:538px;" width="8" height="5" viewBox="0 0 8 5"><path d="M0.5 4.3L3 1.2L4.2 2.3L5.2 1.4L7.5 4.3Z" fill="#d0d0d0"/></svg>
<svg style="left:483px;top:537.5px;" width="30" height="7" viewBox="0 0 30 7"><circle cx="3.5" cy="3.5" r="2.6" fill="none" stroke="#d0d0d0" stroke-width="1"/><path d="M6.2 3.5H29" stroke="#5a5a5a" stroke-width="0.8"/></svg>
<svg style="left:519.5px;top:537.5px;" width="11.5" height="6" viewBox="0 0 11.5 6"><path d="M0.5 5.3L2.5 3L3.2 3.8L6.6 0.6L11 5.3Z" fill="#d8d8d8"/><path d="M2.5 5.3L4 3.6" stroke="#232323" stroke-width="0.6"/></svg>
</body></html>
